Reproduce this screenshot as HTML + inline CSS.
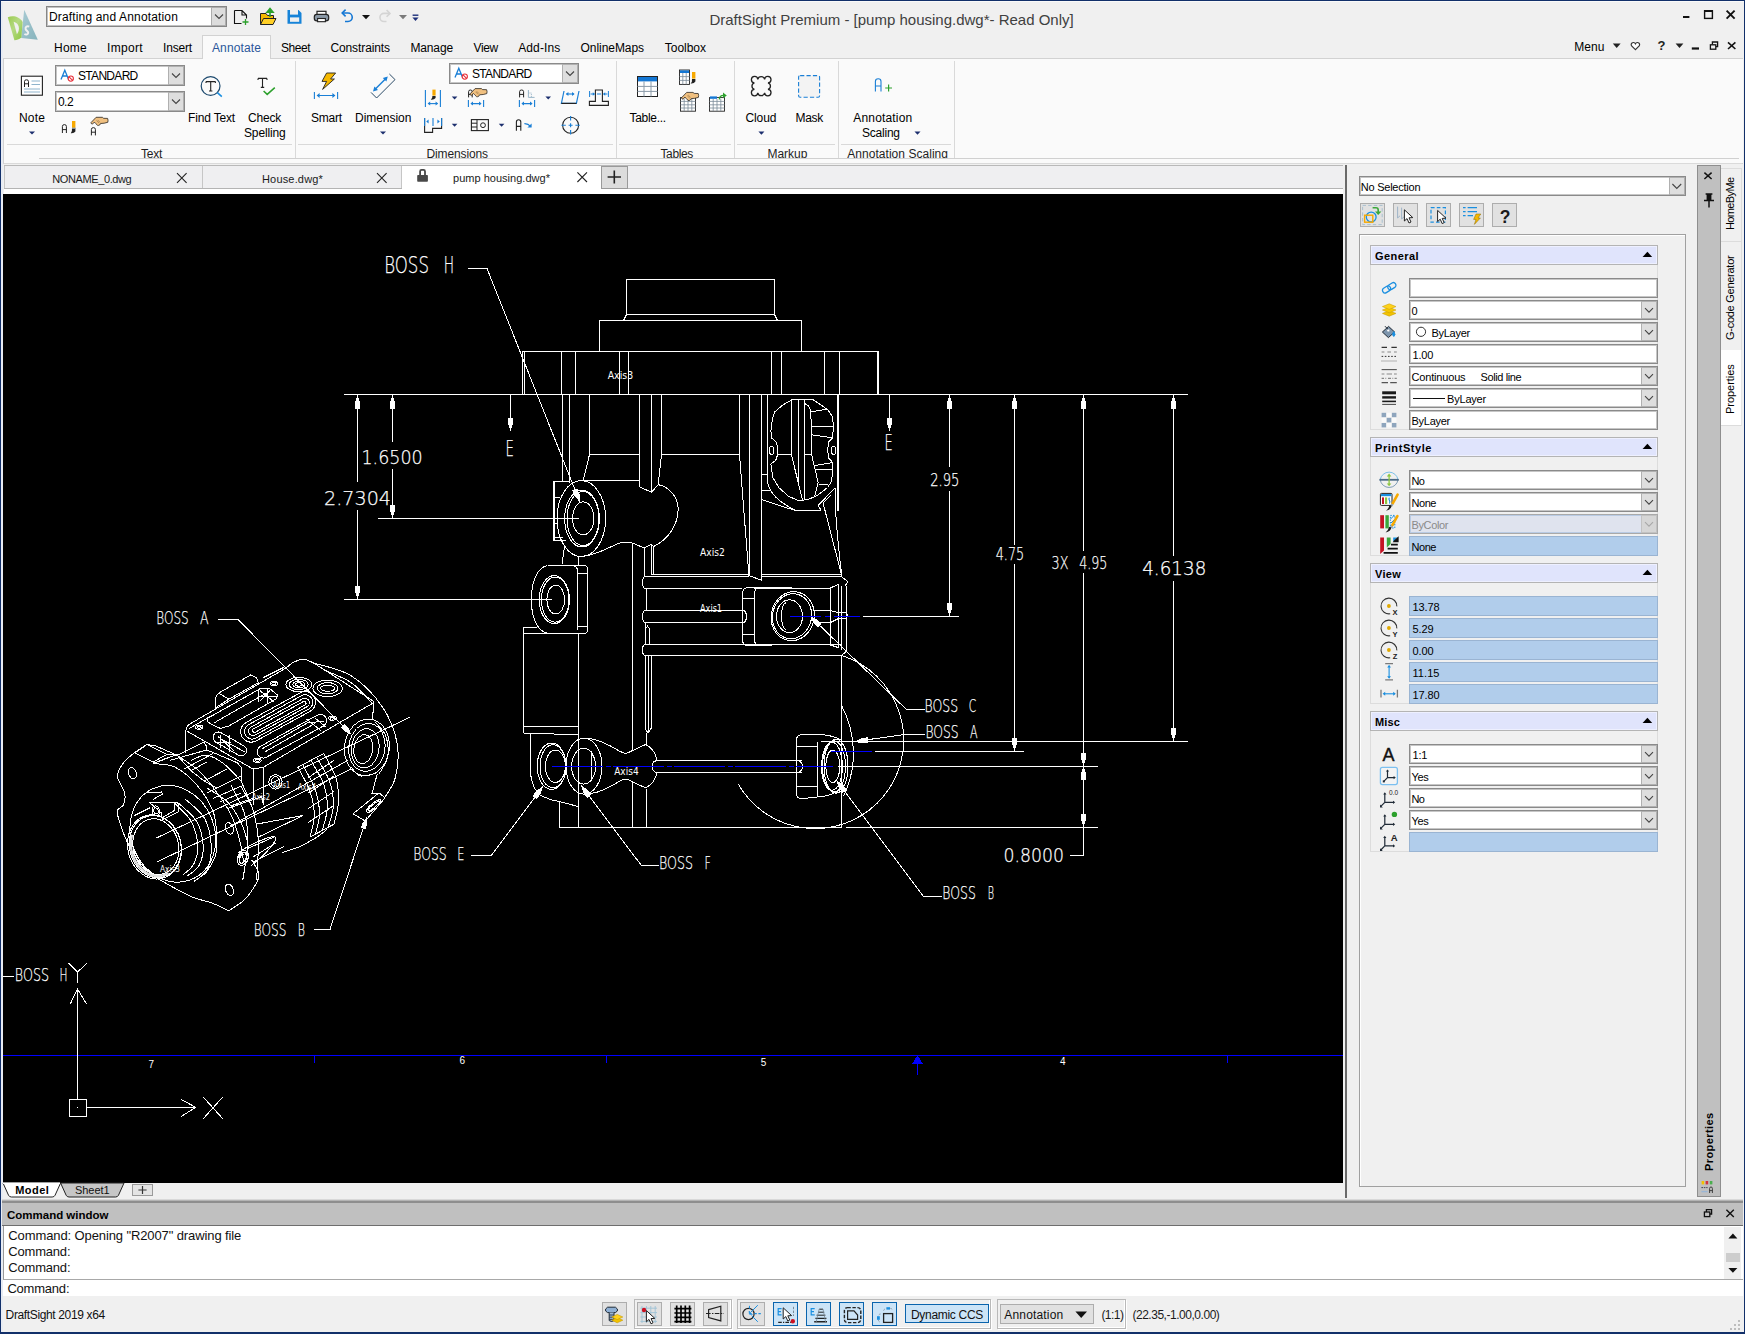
<!DOCTYPE html>
<html lang="en"><head><meta charset="utf-8"><title>DraftSight Premium - [pump housing.dwg*- Read Only]</title>
<style>
*{box-sizing:border-box;margin:0;padding:0}
html,body{width:1745px;height:1334px;overflow:hidden;background:#f0f0f0}
body{font-family:"Liberation Sans",sans-serif;font-size:12px;color:#000}
#app{position:absolute;left:0;top:0;width:1745px;height:1334px;background:#f0f0f0;overflow:hidden}
.abs{position:absolute}
.t{position:absolute;white-space:nowrap;line-height:normal}
svg{position:absolute;overflow:visible}

</style></head>
<body>
<div id="app">
<!-- chrome.html -->
<!-- window frame -->
<div class="abs" style="left:0;top:0;width:1745px;height:1px;background:#12306a"></div>
<div class="abs" style="left:0;top:0;width:1px;height:1334px;background:#12306a"></div>
<div class="abs" style="left:1744px;top:0;width:1px;height:1334px;background:#12306a"></div>
<div class="abs" style="left:0;top:1333px;width:1745px;height:1px;background:#12306a"></div>
<div class="abs" style="left:1px;top:1px;width:1743px;height:1px;background:#fafafa"></div>
<!-- logo -->
<svg style="left:6px;top:8px" width="34" height="34" viewBox="0 0 34 34">
  <defs>
    <linearGradient id="lgG" x1="0" y1="0" x2="1" y2="1"><stop offset="0" stop-color="#9acb4e"/><stop offset=".45" stop-color="#b5da84"/><stop offset="1" stop-color="#8cc63f"/></linearGradient>
    <linearGradient id="lgB" x1="0" y1="0" x2="1" y2="1"><stop offset="0" stop-color="#a9cbd4"/><stop offset="1" stop-color="#86b3bc"/></linearGradient>
  </defs>
  <path d="M18.2 1.8 L31.8 31.8 L15.2 30 Z" fill="url(#lgB)"/>
  <path d="M1.8 9.2 C7 7.2 13.5 8.5 16.6 14 L15.4 29.5 C13 31.6 10.2 32.3 8.4 32.2 Z" fill="url(#lgG)"/>
  <path d="M7.6 13.8 C12.8 15 14.8 21 10.9 26.2 Z" fill="#f0f0f0"/>
  <path d="M23.2 18.6 C21 17.6 19.2 19 19.6 21 C20 23 22.4 23 22.2 25 C22 26.6 19.8 27 18.4 26" fill="none" stroke="#f0f0f0" stroke-width="2"/>
</svg>
<!-- workspace combo -->
<div class="abs" style="left:46px;top:6px;width:181px;height:21px;background:#fff;border:1px solid #868686;box-shadow:inset 0 0 0 1px #c2c2c2"></div>
<div class="abs" style="left:211px;top:7px;width:15px;height:19px;background:#dcdcdc;border:1px solid #adadad"></div>
<svg style="left:214px;top:13px" width="10" height="7" viewBox="0 0 10 7"><path d="M1 1.5 L5 5.5 L9 1.5" fill="none" stroke="#444" stroke-width="1.1"/></svg>
<div class="t" id="wscombo" style="left:49px;top:10px;font-size:12px;letter-spacing:0.155px">Drafting and Annotation</div>
<!-- quick access icons -->
<svg style="left:233px;top:8px" width="190" height="19" viewBox="233 8 190 19">
  <!-- new -->
  <path d="M234.5 10.5 H242 L246.5 15 V18.5 M242 10.5 V15 H246.5 M234.5 10.5 V23.5 H241.5" fill="none" stroke="#111" stroke-width="1.1"/>
  <path d="M245.5 19 V25 M242.5 22 H248.5" stroke="#2ca02c" stroke-width="1.3"/>
  <!-- open -->
  <path d="M260.5 24.5 V13.5 H266 L267.5 15.5 H273.5 V18" fill="#f5b800" stroke="#222" stroke-width="1"/>
  <path d="M260.5 24.5 L263.5 18.5 H276 L273 24.5 Z" fill="#ffcf26" stroke="#222" stroke-width="1"/>
  <path d="M270 17 V11.5 M267 12.2 L270 8.6 L273 12.2 Z" stroke="#2ca02c" stroke-width="1.6" fill="#2ca02c"/>
  <!-- save -->
  <path d="M287.5 10 H298.5 L301.5 13 V23.7 H287.5 Z" fill="#1683d8"/>
  <rect x="290" y="10" width="8" height="4.6" fill="#f0f0f0"/><rect x="290" y="17.4" width="9.2" height="4.4" fill="#f0f0f0"/>
  <!-- print -->
  <rect x="317" y="11.3" width="9" height="3.4" fill="#fff" stroke="#222" stroke-width="1.2"/>
  <rect x="314.3" y="14.3" width="14.4" height="6.6" rx="2.6" fill="#8a98a6" stroke="#222" stroke-width="1.2"/>
  <rect x="317.6" y="18.5" width="7.8" height="3.2" fill="#fff" stroke="#222" stroke-width="1.1"/>
  <!-- undo -->
  <path d="M343 13 H348 A4 4 0 0 1 348 21.5 H345" fill="none" stroke="#1477d4" stroke-width="1.6"/>
  <path d="M345.6 9.6 L342.2 13 L345.6 16.4" fill="none" stroke="#1477d4" stroke-width="1.6"/>
  <path d="M362 15 H370 L366 19.2 Z" fill="#111"/>
  <!-- redo (disabled) -->
  <path d="M389 13.4 H384 A4 4 0 0 0 384 21.5 H386.5" fill="none" stroke="#d4d4d4" stroke-width="1.6"/>
  <path d="M386.6 10 L390 13.4 L386.6 16.8" fill="none" stroke="#d4d4d4" stroke-width="1.6"/>
  <path d="M399 15 H407 L403 19.2 Z" fill="#7a7a7a"/>
  <!-- customize -->
  <path d="M412.6 15.2 H418.4" stroke="#1c2f7a" stroke-width="1.4"/><path d="M412.4 17.6 H418.6 L415.5 21 Z" fill="#1c2f7a"/>
</svg>
<!-- title -->
<div class="t" id="title" style="left:709.4px;top:11px;font-size:15px;color:#404040">DraftSight Premium - [pump housing.dwg*- Read Only]</div>
<!-- window controls -->
<svg style="left:1680px;top:8px" width="60" height="14" viewBox="1680 8 60 14">
  <rect x="1683" y="16" width="6.4" height="2" fill="#111"/>
  <rect x="1704.6" y="10.8" width="7.8" height="7.6" fill="none" stroke="#111" stroke-width="1.4"/><rect x="1704" y="10" width="9" height="2" fill="#111"/>
  <path d="M1726.6 10.6 L1734.6 18.6 M1734.6 10.6 L1726.6 18.6" stroke="#111" stroke-width="1.9"/>
</svg>
<!-- right menu on tab row -->
<div class="t" id="menutxt" style="left:1574.3px;top:40px;font-size:12px;letter-spacing:0.02px">Menu</div>
<svg style="left:1610px;top:39px" width="130" height="15" viewBox="1610 39 130 15">
  <path d="M1612.8 43.6 H1620.6 L1616.7 48 Z" fill="#222"/>
  <path d="M1635.4 49.6 L1631.4 45.6 A2.1 2.1 0 0 1 1635.4 43.9 A2.1 2.1 0 0 1 1639.4 45.6 Z" fill="#fff" stroke="#333" stroke-width="1.1"/>
  <path d="M1675.6 43.6 H1683.4 L1679.5 48 Z" fill="#222"/>
  <rect x="1691.8" y="47.4" width="7.2" height="2.2" fill="#111"/>
  <rect x="1710.4" y="44.8" width="5.4" height="4.4" fill="none" stroke="#111" stroke-width="1.3"/>
  <path d="M1712.4 44.6 V42 H1717.6 V46.6 H1716" fill="none" stroke="#111" stroke-width="1.3"/>
  <path d="M1728 42.4 L1735.4 49 M1735.4 42.4 L1728 49" stroke="#111" stroke-width="1.6"/>
</svg>
<div class="t" style="left:1657.6px;top:38px;font-size:13px;font-weight:bold;color:#222">?</div>

<!-- ribbon.html -->
<div class="abs" style="left:3px;top:58px;width:1740px;height:106px;background:#fafafa;border:1px solid #d2d2d2;border-right:none"></div>
<div class="abs" style="left:4px;top:163px;width:1738px;height:1px;background:#dadada"></div>
<div class="abs" style="left:202px;top:35px;width:69px;height:24px;background:#fafafa;border:1px solid #d2d2d2;border-bottom:none"></div>
<div class="t" style="left:54.00px;top:41.00px;font-size:12px;letter-spacing:0.247px;">Home</div>
<div class="t" style="left:107.00px;top:41.00px;font-size:12px;letter-spacing:0.332px;">Import</div>
<div class="t" style="left:163.00px;top:41.00px;font-size:12px;letter-spacing:-0.169px;">Insert</div>
<div class="t" style="left:212.00px;top:41.00px;font-size:12px;letter-spacing:0.120px;color:#2b579a;">Annotate</div>
<div class="t" style="left:281.00px;top:41.00px;font-size:12px;letter-spacing:-0.472px;">Sheet</div>
<div class="t" style="left:330.40px;top:41.00px;font-size:12px;letter-spacing:-0.099px;">Constraints</div>
<div class="t" style="left:410.40px;top:41.00px;font-size:12px;letter-spacing:-0.128px;">Manage</div>
<div class="t" style="left:473.40px;top:41.00px;font-size:12px;letter-spacing:-0.298px;">View</div>
<div class="t" style="left:518.20px;top:41.00px;font-size:12px;letter-spacing:0.121px;">Add-Ins</div>
<div class="t" style="left:580.60px;top:41.00px;font-size:12px;letter-spacing:-0.063px;">OnlineMaps</div>
<div class="t" style="left:664.80px;top:41.00px;font-size:12px;letter-spacing:-0.023px;">Toolbox</div>
<div class="abs" style="left:295px;top:61px;width:1px;height:98px;background:#d9d9d9"></div>
<div class="abs" style="left:616px;top:61px;width:1px;height:98px;background:#d9d9d9"></div>
<div class="abs" style="left:734px;top:61px;width:1px;height:98px;background:#d9d9d9"></div>
<div class="abs" style="left:838px;top:61px;width:1px;height:98px;background:#d9d9d9"></div>
<div class="abs" style="left:954px;top:61px;width:1px;height:98px;background:#d9d9d9"></div>
<div class="abs" style="left:7px;top:144px;width:285px;height:1px;background:#d9d9d9"></div>
<div class="abs" style="left:298px;top:144px;width:315px;height:1px;background:#d9d9d9"></div>
<div class="abs" style="left:619px;top:144px;width:112px;height:1px;background:#d9d9d9"></div>
<div class="abs" style="left:737px;top:144px;width:98px;height:1px;background:#d9d9d9"></div>
<div class="abs" style="left:841px;top:144px;width:110px;height:1px;background:#d9d9d9"></div>
<div class="abs" style="left:39px;top:158px;width:1700px;height:1px;background:#d0d0d0"></div>
<div class="abs" style="left:4px;top:146px;width:1000px;height:12.4px;overflow:hidden">
<div class="t" style="left:137.00px;top:1.00px;font-size:12px;letter-spacing:-0.252px;color:#1e1e1e;">Text</div>
<div class="t" style="left:422.50px;top:1.00px;font-size:12px;letter-spacing:-0.119px;color:#1e1e1e;">Dimensions</div>
<div class="t" style="left:656.50px;top:1.00px;font-size:12px;letter-spacing:-0.398px;color:#1e1e1e;">Tables</div>
<div class="t" style="left:763.40px;top:1.00px;font-size:12px;letter-spacing:0.014px;color:#1e1e1e;">Markup</div>
<div class="t" style="left:843.30px;top:1.00px;font-size:12px;letter-spacing:0.035px;color:#1e1e1e;">Annotation Scaling</div>
</div>
<div class="t" style="left:19.00px;top:111.00px;font-size:12px;letter-spacing:0.163px;">Note</div>
<div class="t" style="left:188.00px;top:111.00px;font-size:12px;letter-spacing:-0.163px;">Find Text</div>
<div class="t" style="left:248.00px;top:111.00px;font-size:12px;letter-spacing:-0.203px;">Check</div>
<div class="t" style="left:244.00px;top:126.00px;font-size:12px;letter-spacing:-0.150px;">Spelling</div>
<div class="t" style="left:311.00px;top:111.00px;font-size:12px;letter-spacing:-0.201px;">Smart</div>
<div class="t" style="left:355.00px;top:111.00px;font-size:12px;letter-spacing:-0.032px;">Dimension</div>
<div class="t" style="left:629.50px;top:111.00px;font-size:12px;letter-spacing:-0.299px;">Table...</div>
<div class="t" style="left:745.40px;top:111.00px;font-size:12px;letter-spacing:-0.051px;">Cloud</div>
<div class="t" style="left:795.50px;top:111.00px;font-size:12px;letter-spacing:-0.293px;">Mask</div>
<div class="t" style="left:853.30px;top:111.00px;font-size:12px;letter-spacing:0.172px;">Annotation</div>
<div class="t" style="left:862.00px;top:126.00px;font-size:12px;letter-spacing:-0.223px;">Scaling</div>
<div class="abs" style="left:55px;top:65px;width:130px;height:21px;background:#fff;border:1px solid #8a8a8a;box-shadow:inset 0 0 0 1px #c6c6c6"></div>
<div class="abs" style="left:168px;top:66px;width:16px;height:19px;background:#dedede;border:1px solid #b0b0b0"></div>
<svg style="left:171px;top:72.0px" width="10" height="7" viewBox="0 0 10 7"><path d="M1 1.5 L5 5.5 L9 1.5" fill="none" stroke="#444" stroke-width="1.1"/></svg>
<div class="t" style="left:78.00px;top:69.00px;font-size:12px;letter-spacing:-0.690px;">STANDARD</div>
<svg style="left:60px;top:69px" width="16" height="14" viewBox="0 0 16 14"><path d="M1 10.5 L4.8 1.2 L8.6 10.5 M2.4 7 H7.2" fill="none" stroke="#1a7fd6" stroke-width="1.3"/><circle cx="10.8" cy="9.6" r="2.6" fill="#fff" stroke="#e8303a" stroke-width="1.1"/><path d="M9 7.8 L12.6 11.4" stroke="#e8303a" stroke-width="1.1"/></svg>
<div class="abs" style="left:55px;top:91px;width:130px;height:21px;background:#fff;border:1px solid #8a8a8a;box-shadow:inset 0 0 0 1px #c6c6c6"></div>
<div class="abs" style="left:168px;top:92px;width:16px;height:19px;background:#dedede;border:1px solid #b0b0b0"></div>
<svg style="left:171px;top:98.0px" width="10" height="7" viewBox="0 0 10 7"><path d="M1 1.5 L5 5.5 L9 1.5" fill="none" stroke="#444" stroke-width="1.1"/></svg>
<div class="t" style="left:58.00px;top:95.00px;font-size:12px;letter-spacing:-0.561px;">0.2</div>
<div class="abs" style="left:449px;top:63px;width:130px;height:21px;background:#fff;border:1px solid #8a8a8a;box-shadow:inset 0 0 0 1px #c6c6c6"></div>
<div class="abs" style="left:562px;top:64px;width:16px;height:19px;background:#dedede;border:1px solid #b0b0b0"></div>
<svg style="left:565px;top:70.0px" width="10" height="7" viewBox="0 0 10 7"><path d="M1 1.5 L5 5.5 L9 1.5" fill="none" stroke="#444" stroke-width="1.1"/></svg>
<div class="t" style="left:472.00px;top:67.00px;font-size:12px;letter-spacing:-0.690px;">STANDARD</div>
<svg style="left:454px;top:67px" width="16" height="14" viewBox="0 0 16 14"><path d="M1 10.5 L4.8 1.2 L8.6 10.5 M2.4 7 H7.2" fill="none" stroke="#1a7fd6" stroke-width="1.3"/><circle cx="10.8" cy="9.6" r="2.6" fill="#fff" stroke="#e8303a" stroke-width="1.1"/><path d="M9 7.8 L12.6 11.4" stroke="#e8303a" stroke-width="1.1"/></svg>
<svg style="left:0;top:58px" width="1000" height="106" viewBox="0 58 1000 106">
<g fill="none" stroke-linecap="butt">
<!-- dropdown arrows -->
<g fill="#1c2f6e" stroke="none">
<path d="M29 131.4 H35 L32 134.6 Z"/><path d="M380 131.4 H386 L383 134.6 Z"/><path d="M758.4 131.6 H764.4 L761.4 134.8 Z"/><path d="M914.5 131.6 H920.5 L917.5 134.8 Z"/>
<path d="M451.8 96.6 H457.4 L454.6 99.6 Z"/><path d="M545.4 96.6 H551 L548.2 99.6 Z"/><path d="M451.8 123.8 H457.4 L454.6 126.8 Z"/><path d="M498.8 123.8 H504.4 L501.6 126.8 Z"/>
</g>
<!-- Note icon -->
<rect x="21.4" y="76.2" width="21" height="19" fill="#fff" stroke="#222" stroke-width="1.1"/>
<path d="M24.5 87 V81.4 Q24.5 79.8 26.5 79.8 Q28.5 79.8 28.5 81.4 V87 M24.5 83.8 H28.5" stroke="#222" stroke-width="1"/>
<path d="M31.5 81 H40 M31.5 84.5 H40" stroke="#8fb4cc" stroke-width="1"/><path d="M24 89 H40 M24 92 H40" stroke="#8fb4cc" stroke-width="1"/>
<!-- A-brush icon -->
<path d="M62.4 133 V126.4 Q62.4 124.6 64.4 124.6 Q66.4 124.6 66.4 126.4 V133 M62.4 129.6 H66.4" stroke="#222" stroke-width="1"/>
<rect x="72" y="121" width="3.4" height="7" fill="#f7a900" stroke="none"/><path d="M72 128 H75.4 V131.5 Q74 133.6 70.8 133.2 Q72.4 131.6 72 128 Z" fill="#222" stroke="none"/><rect x="72" y="127.6" width="3.4" height="1.2" fill="#9ab" stroke="none"/>
<!-- A-hand icon -->
<path d="M91.4 135.4 V129.4 Q91.4 127.6 93.4 127.6 Q95.4 127.6 95.4 129.4 V135.4 M91.4 132.2 H95.4" stroke="#222" stroke-width="1"/>
<g transform="translate(91 117.3)"><path d="M0 5.3 L5.1 0 H11.4 L12.6 1 L16.6 1.1 Q17.4 3 16.8 5 L13.2 5.9 L9.6 6.2 L8.7 7.7 Q7.6 8.4 6.5 8 L4.7 6.2 L3.3 4.8 L1.5 6.8 L0.2 6.2 Z" fill="#f0c080" stroke="#2a2420" stroke-width=".8" stroke-linejoin="round"/><path d="M5.6 3.2 L8.2 5.8 M6.6 2.6 L9 5" stroke="#7a5a30" stroke-width=".5" fill="none"/></g>
<!-- Find Text -->
<circle cx="210.6" cy="86" r="9.4" stroke="#1d4a6e" stroke-width="1.2" fill="#fafafa"/>
<path d="M217.4 92.6 L221.8 96.6" stroke="#1a8fe0" stroke-width="1.6"/>
<path d="M206 81.6 H215.4 M206 81.6 V83 M215.4 81.6 V83 M210.7 81.6 V91 M209 91 H212.4" stroke="#222" stroke-width="1.1"/>
<!-- Check spelling -->
<path d="M258 78.4 H267 M258 78.4 V80 M267 78.4 V80 M262.5 78.4 V87.4 M260.8 87.4 H264.2" stroke="#222" stroke-width="1.1"/>
<path d="M263.6 91 L267.2 94.4 L274.8 87.6" stroke="#2ca02c" stroke-width="1.5"/>
<!-- Smart dimension -->
<path d="M326.6 73 H335.6 L330.6 79 H334.4 L322.6 89.4 L326.6 81.4 H322 Z" fill="#f5b800" stroke="#222" stroke-width=".9"/>
<path d="M314.4 92 V99 M337.6 92 V99 M317 95.5 H335" stroke="#1a7fd6" stroke-width="1.1"/><path d="M319.6 93 L316.6 95.5 L319.6 98 Z M332.4 93 L335.4 95.5 L332.4 98 Z" fill="#1a7fd6" stroke="none"/>
<!-- Dimension icon -->
<path d="M374.4 90 L386.4 78" stroke="#1a7fd6" stroke-width="1.4"/><path d="M373 91.4 L374.4 86.4 L378 90 Z M387.8 76.6 L386.4 81.6 L382.8 78 Z" fill="#1a7fd6" stroke="none"/>
<path d="M371 92.4 L376.6 98 L395 79.6 L389.4 74" stroke="#2a4a66" stroke-width="1"/>
<!-- row1 icon 1: dim style brush -->
<path d="M425.4 90 V107 M440.4 90 V107" stroke="#1a7fd6" stroke-width="1.1"/><path d="M428.4 103.6 H437.4" stroke="#1a7fd6" stroke-width="1.1"/><path d="M430.2 101.6 L427.6 103.6 L430.2 105.6 Z M435.6 101.6 L438.2 103.6 L435.6 105.6 Z" fill="#1a7fd6" stroke="none"/>
<rect x="432.4" y="89.6" width="3.2" height="6" fill="#f7a900" stroke="none"/><path d="M432.4 96 H435.6 V98 Q434 100 430.8 99.6 Q432.6 98.2 432.4 96 Z" fill="#222" stroke="none"/>
<!-- row1 icon 2: A hand + arrows -->
<path d="M468.6 97.4 V91.6 Q468.6 90 470.4 90 Q472.2 90 472.2 91.6 V97.4 M468.6 94.4 H472.2" stroke="#222" stroke-width="1"/>
<g transform="translate(470 88.6)"><path d="M0 5.3 L5.1 0 H11.4 L12.6 1 L16.6 1.1 Q17.4 3 16.8 5 L13.2 5.9 L9.6 6.2 L8.7 7.7 Q7.6 8.4 6.5 8 L4.7 6.2 L3.3 4.8 L1.5 6.8 L0.2 6.2 Z" fill="#f0c080" stroke="#2a2420" stroke-width=".8" stroke-linejoin="round"/><path d="M5.6 3.2 L8.2 5.8 M6.6 2.6 L9 5" stroke="#7a5a30" stroke-width=".5" fill="none"/></g>
<path d="M468.4 100 V107 M483.6 100 V107 M471 103.6 H481" stroke="#1a7fd6" stroke-width="1.1"/><path d="M473 101.6 L470.4 103.6 L473 105.6 Z M479 101.6 L481.6 103.6 L479 105.6 Z" fill="#1a7fd6" stroke="none"/>
<!-- row1 icon 3: A ruler + arrows -->
<path d="M519.6 97.4 V91.6 Q519.6 90 521.6 90 Q523.6 90 523.6 91.6 V97.4 M519.6 94.4 H523.6" stroke="#222" stroke-width="1"/>
<path d="M528.4 90 V97.4 H534.6" stroke="#9ab6c8" stroke-width="1"/><path d="M528.4 93 H531.4 V97" stroke="#9ab6c8" stroke-width=".9" stroke-dasharray="1.2 .8"/>
<path d="M519.4 100 V107 M534.6 100 V107 M522 103.6 H532" stroke="#1a7fd6" stroke-width="1.1"/><path d="M524 101.6 L521.4 103.6 L524 105.6 Z M530 101.6 L532.6 103.6 L530 105.6 Z" fill="#1a7fd6" stroke="none"/>
<!-- row1 icon 4: oblique -->
<path d="M564 91 L561.4 103.4 H576.4 L579 91" stroke="#1a7fd6" stroke-width="1.2"/><path d="M561.4 103.4 H576.4" stroke="#222" stroke-width="1.2"/>
<path d="M566.4 94 H574" stroke="#1a7fd6" stroke-width="1.1"/><path d="M568.4 92 L565.8 94 L568.4 96 Z M572 92 L574.6 94 L572 96 Z" fill="#1a7fd6" stroke="none"/>
<!-- row1 icon 5: tolerance -->
<path d="M589.4 105.4 V101.4 H595.4 V90 H602.4 V101.4 H608.4 V105.4 Z" stroke="#222" stroke-width="1.1"/>
<path d="M589.6 91 V97 M608.4 91 V97 M597 94 H601" stroke="#1a7fd6" stroke-width="1"/><path d="M590.6 94 H594.4 M603.6 94 H607.4" stroke="#1a7fd6" stroke-width="1"/><path d="M592.8 92.2 L595 94 L592.8 95.8 Z M605.2 92.2 L603 94 L605.2 95.8 Z" fill="#1a7fd6" stroke="none"/>
<!-- row2 icon 1: baseline -->
<path d="M424.6 118 V132.4 H432.6 V128.4 H441.6 V118" stroke="#222" stroke-width="1.1"/><path d="M424.6 118 V126 M433 118 V126 M441.6 118 V126" stroke="#1a7fd6" stroke-width="1.1"/>
<path d="M428.6 119.4 L426.2 121.4 L428.6 123.4 Z M437.4 119.4 L439.8 121.4 L437.4 123.4 Z" fill="#1a7fd6" stroke="none"/>
<!-- row2 icon 2: tolerance frame -->
<rect x="471.4" y="119.6" width="17" height="11" stroke="#222" stroke-width="1.1"/><path d="M477 119.6 V130.6 M471.4 123.2 H477 M471.4 127 H477" stroke="#222" stroke-width="1"/><circle cx="483" cy="125.2" r="2.4" stroke="#222" stroke-width="1"/>
<!-- row2 icon 3: A arrow -->
<path d="M516.4 130.8 V122 Q516.4 119.8 518.6 119.8 Q520.8 119.8 520.8 122 V130.8 M516.4 126.4 H520.8" stroke="#222" stroke-width="1.1"/>
<path d="M524.4 123.6 Q528 123.4 530.6 126.4" stroke="#1a7fd6" stroke-width="1.2"/><path d="M531.6 123.4 V127.6 H527.4 Z" fill="#1a7fd6" stroke="none"/>
<!-- row2 icon 4: center mark -->
<circle cx="570.6" cy="125.2" r="8" stroke="#222" stroke-width="1.1"/><path d="M570.6 116 V120.4 M570.6 130 V134.4 M561.4 125.2 H565.8 M575.4 125.2 H579.8 M568.6 125.2 H572.6 M570.6 123.2 V127.2" stroke="#1a7fd6" stroke-width="1.1"/>
<!-- Table big icon -->
<rect x="637.5" y="76.5" width="20" height="20" fill="#fff" stroke="#222" stroke-width="1"/><rect x="638" y="77" width="19" height="4.4" fill="#1477d4" stroke="none"/>
<path d="M644 81.4 V96.5 M651 81.4 V96.5 M637.5 86.4 H657.5 M637.5 91.4 H657.5" stroke="#8a9aa8" stroke-width="1"/>
<!-- small table icons -->
<g>
<rect x="679.5" y="70" width="10" height="14.4" fill="#fff" stroke="#222" stroke-width=".9"/><rect x="680" y="70.4" width="9" height="2.6" fill="#1477d4" stroke="none"/><path d="M682.8 73 V84.4 M686.2 73 V84.4 M679.5 76.6 H689.5 M679.5 80.4 H689.5" stroke="#7a8a98" stroke-width=".8"/>
<rect x="692" y="72" width="3.4" height="6.6" fill="#f7a900" stroke="none"/><path d="M692 79 H695.4 V81.6 Q694 83.8 690.6 83.4 Q692.4 82 692 79 Z" fill="#222" stroke="none"/>
<rect x="680.5" y="97.6" width="15" height="13.6" fill="#fff" stroke="#222" stroke-width=".9"/><path d="M684.2 99 V111 M688 99 V111 M691.8 99 V111 M680.5 101.4 H695.5 M680.5 104.8 H695.5 M680.5 108 H695.5" stroke="#7a8a98" stroke-width=".8"/>
<g transform="translate(681.6 92.4)"><path d="M0 5.3 L5.1 0 H11.4 L12.6 1 L16.6 1.1 Q17.4 3 16.8 5 L13.2 5.9 L9.6 6.2 L8.7 7.7 Q7.6 8.4 6.5 8 L4.7 6.2 L3.3 4.8 L1.5 6.8 L0.2 6.2 Z" fill="#f0c080" stroke="#2a2420" stroke-width=".8" stroke-linejoin="round"/><path d="M5.6 3.2 L8.2 5.8 M6.6 2.6 L9 5" stroke="#7a5a30" stroke-width=".5" fill="none"/></g>
<rect x="709.5" y="97.6" width="15" height="13.6" fill="#fff" stroke="#222" stroke-width=".9"/><rect x="710" y="96.4" width="7" height="2.4" fill="#1477d4" stroke="none"/><path d="M713.2 99 V111 M717 99 V111 M720.8 99 V111 M709.5 101.4 H724.5 M709.5 104.8 H724.5 M709.5 108 H724.5" stroke="#7a8a98" stroke-width=".8"/>
<path d="M719.4 99.4 Q719.4 95.4 723.6 95.4" stroke="#2ca02c" stroke-width="1.4"/><path d="M723 92.6 L726.8 95.4 L723 98.2 Z" fill="#2ca02c" stroke="none"/>
</g>
<!-- Cloud -->
<path d="M757.8 79.4 A3.45 3.45 0 0 1 764.6 79.4 A3.2 3.2 0 1 1 768 82.8 A3.45 3.45 0 0 1 768 89.4 A3.2 3.2 0 1 1 764.6 92.8 A3.45 3.45 0 0 1 757.8 92.8 A3.2 3.2 0 1 1 754.4 89.4 A3.45 3.45 0 0 1 754.4 82.8 A3.2 3.2 0 1 1 757.8 79.4 Z" stroke="#222" stroke-width="1.3"/>
<!-- Mask -->
<rect x="798.6" y="75.6" width="21" height="21.6" rx="1.5" fill="#f3f3f3" stroke="#1a7fd6" stroke-width="1.1" stroke-dasharray="4.2 2.2"/>
<!-- Annotation scaling A+ -->
<path d="M875.4 91.4 V81.4 Q875.4 78.8 878.2 78.8 Q881 78.8 881 81.4 V91.4 M875.4 86 H881" stroke="#1a7fd6" stroke-width="1.1"/>
<path d="M888.6 84.6 V91.6 M885.2 88 H892" stroke="#2ca02c" stroke-width="1.2"/>
</g>
</svg>

<!-- doctabs.html -->
<div class="abs" style="left:4px;top:165px;width:1339px;height:24px;background:#efeff1;border-top:1px solid #b9b9b9;border-bottom:1px solid #b4b4b4"></div>
<div class="abs" style="left:4px;top:189px;width:1339px;height:5px;background:#fff"></div>
<div class="abs" style="left:4px;top:166px;width:1px;height:22px;background:#c6c6c6"></div>
<div class="abs" style="left:202px;top:166px;width:1px;height:22px;background:#c6c6c6"></div>
<div class="abs" style="left:402px;top:166px;width:199px;height:28px;background:#fff"></div>
<div class="abs" style="left:401px;top:166px;width:1px;height:22px;background:#c6c6c6"></div>
<div class="abs" style="left:601px;top:166px;width:27px;height:23px;background:#dcdcdc;border:1px solid #9a9a9a"></div>
<div class="t" style="left:52.30px;top:173.00px;font-size:11px;letter-spacing:-0.396px;color:#1a1a1a;">NONAME_0.dwg</div>
<div class="t" style="left:262.00px;top:173.00px;font-size:11px;letter-spacing:0.169px;color:#1a1a1a;">House.dwg*</div>
<div class="t" style="left:453.00px;top:172.00px;font-size:11px;letter-spacing:0.022px;color:#1a1a1a;">pump housing.dwg*</div>
<svg style="left:0;top:160px" width="700" height="34" viewBox="0 160 700 34">
<path d="M177 173.2 L186.6 182.8 M186.6 173.2 L177 182.8" stroke="#222" stroke-width="1.1"/>
<path d="M377 173.2 L386.6 182.8 M386.6 173.2 L377 182.8" stroke="#222" stroke-width="1.1"/>
<path d="M577.4 172.4 L587 182 M587 172.4 L577.4 182" stroke="#222" stroke-width="1.1"/>
<path d="M607.6 177 H621 M614.3 170.6 V183.4" stroke="#222" stroke-width="1.6"/>
<rect x="417.2" y="175" width="10.7" height="6.8" rx="0.8" fill="#484848"/><path d="M420.1 175.4 V171.4 Q420.1 169.9 421.6 169.9 H423.5 Q425 169.9 425 171.4 V175.4" fill="none" stroke="#484848" stroke-width="1.8"/>
</svg>

<!-- canvas.html -->
<div class="abs" style="left:3px;top:194px;width:1340px;height:989px;background:#000;overflow:hidden">
<svg style="left:-3px;top:-194px" width="1346" height="1186" viewBox="0 0 1346 1186">
<style>.w{fill:none;stroke:#fff;stroke-width:1;shape-rendering:crispEdges}.w .f,.f{fill:#fff;stroke:none}.b{fill:none;stroke:#0000ff;stroke-width:1;shape-rendering:crispEdges}.ct{font-family:"DejaVu Sans Light","DejaVu Sans","Liberation Sans",sans-serif;font-weight:200;fill:#fff;stroke:#fff;stroke-width:.25}.ct2{font-family:"DejaVu Sans","Liberation Sans",sans-serif;font-weight:400;fill:#fff;stroke:none}.st{font-family:"Liberation Sans",sans-serif;fill:#fff;stroke:none}</style>
<g class="w">
<path d="M344.0 394.5 L1188.0 394.5"/>
<path d="M357.5 395.0 L357.5 482.0"/>
<path d="M357.5 510.0 L357.5 599.0"/>
<polygon class="f" points="357.5,395.0 360.1,402.4 360.1,408.5 354.9,408.5 354.9,402.4"/>
<polygon class="f" points="357.5,599.0 354.9,591.6 354.9,585.5 360.1,585.5 360.1,591.6"/>
<path d="M392.5 395.0 L392.5 442.0"/>
<path d="M392.5 469.0 L392.5 518.0"/>
<polygon class="f" points="392.5,395.0 395.1,402.4 395.1,408.5 389.9,408.5 389.9,402.4"/>
<polygon class="f" points="392.5,518.0 389.9,510.6 389.9,504.5 395.1,504.5 395.1,510.6"/>
<path d="M378.0 518.5 L579.0 518.5"/>
<path d="M344.0 599.5 L552.0 599.5"/>
<path d="M510.5 395.0 L510.5 431.0"/>
<polygon class="f" points="510.5,431.5 508.1,423.8 508.1,417.5 512.9,417.5 512.9,423.8"/>
<path d="M889.5 395.0 L889.5 431.0"/>
<polygon class="f" points="889.5,431.5 887.1,423.8 887.1,417.5 891.9,417.5 891.9,423.8"/>
<path d="M949.5 395.0 L949.5 467.0"/>
<path d="M949.5 491.0 L949.5 616.0"/>
<polygon class="f" points="949.5,395.0 952.1,402.4 952.1,408.5 946.9,408.5 946.9,402.4"/>
<polygon class="f" points="949.5,616.0 946.9,608.6 946.9,602.5 952.1,602.5 952.1,608.6"/>
<path d="M863.0 616.5 L959.0 616.5"/>
<path d="M1014.5 395.0 L1014.5 545.0"/>
<path d="M1014.5 564.0 L1014.5 751.0"/>
<polygon class="f" points="1014.5,395.0 1017.1,402.4 1017.1,408.5 1011.9,408.5 1011.9,402.4"/>
<polygon class="f" points="1014.5,751.0 1011.9,743.6 1011.9,737.5 1017.1,737.5 1017.1,743.6"/>
<path d="M875.0 751.5 L1024.0 751.5"/>
<path d="M1083.5 395.0 L1083.5 551.0"/>
<path d="M1083.5 573.0 L1083.5 855.5"/>
<polygon class="f" points="1083.5,395.0 1086.1,402.4 1086.1,408.5 1080.9,408.5 1080.9,402.4"/>
<polygon class="f" points="1083.5,766.0 1080.9,758.6 1080.9,752.5 1086.1,752.5 1086.1,758.6"/>
<polygon class="f" points="1083.5,766.5 1086.1,773.9 1086.1,780.0 1080.9,780.0 1080.9,773.9"/>
<polygon class="f" points="1083.5,827.0 1080.9,819.6 1080.9,813.5 1086.1,813.5 1086.1,819.6"/>
<path d="M1070.0 855.5 L1083.5 855.5"/>
<path d="M1173.5 395.0 L1173.5 556.0"/>
<path d="M1173.5 581.0 L1173.5 741.0"/>
<polygon class="f" points="1173.5,395.0 1176.1,402.4 1176.1,408.5 1170.9,408.5 1170.9,402.4"/>
<polygon class="f" points="1173.5,741.0 1170.9,733.6 1170.9,727.5 1176.1,727.5 1176.1,733.6"/>
<path d="M821.0 741.5 L1188.0 741.5"/>
<path d="M838.0 766.5 L1098.0 766.5"/>
<path d="M846.0 827.5 L1098.0 827.5"/>
<path d="M468.0 268.5 L487.0 268.5 L580.0 502.3"/>
<polygon class="f" points="580.0,502.3 574.7,496.1 572.4,490.3 577.2,488.3 579.6,494.2"/>
<path d="M924.6 709.5 L906.4 709.5 L810.1 616.1"/>
<polygon class="f" points="810.1,616.1 817.4,619.6 822.0,624.0 818.3,627.7 813.8,623.3"/>
<path d="M924.6 734.5 L904.5 734.5 L854.1 741.6"/>
<polygon class="f" points="854.1,741.8 861.4,738.2 867.6,737.3 868.3,742.4 862.1,743.3"/>
<path d="M942.3 896.5 L923.4 896.5 L836.2 780.1"/>
<polygon class="f" points="836.2,780.1 842.9,784.7 846.7,789.7 842.5,792.9 838.7,787.8"/>
<path d="M659.0 865.5 L641.4 865.5 L580.9 785.2"/>
<polygon class="f" points="580.9,785.2 587.6,789.8 591.4,794.8 587.2,797.9 583.5,792.9"/>
<path d="M471.0 855.5 L491.3 855.5 L543.0 786.4"/>
<polygon class="f" points="543.0,786.4 540.5,794.1 536.7,799.2 532.5,796.1 536.3,791.0"/>
<path d="M623.5 320.5 L626.5 314.4 L626.5 279.5 L774.5 279.5 L774.5 314.4 L777.5 320.5"/>
<path d="M626.5 314.5 L774.5 314.5"/>
<path d="M599.5 351.5 L599.5 320.5 L801.5 320.5 L801.5 351.5"/>
<path d="M522.5 394.5 L522.5 351.5 L878.5 351.5 L878.5 394.5"/>
<path d="M524.5 351.5 L524.5 394.5"/>
<path d="M877.5 351.5 L877.5 394.5"/>
<path d="M561.5 351.5 L561.5 394.5"/>
<path d="M575.5 351.5 L575.5 394.5"/>
<path d="M619.5 351.5 L619.5 394.5"/>
<path d="M628.5 351.5 L628.5 394.5"/>
<path d="M771.5 351.5 L771.5 394.5"/>
<path d="M781.5 351.5 L781.5 394.5"/>
<path d="M824.5 351.5 L824.5 394.5"/>
<path d="M839.5 351.5 L839.5 394.5"/>
<path d="M562.5 394.5 L562.5 481.5"/>
<path d="M569.5 394.5 L569.5 483.0"/>
<path d="M589.5 394.5 L589.5 454.5 L583.2 480.5"/>
<path d="M589.5 454.5 L639.5 454.5"/>
<path d="M583.0 480.5 L639.5 480.5"/>
<path d="M639.5 394.5 L639.5 486.8 L651.5 492.3 L651.5 394.5"/>
<path d="M661.5 394.5 L661.5 454.5 L658.2 484.7 L651.5 492.3"/>
<path d="M661.5 454.5 L739.5 454.5"/>
<path d="M739.5 394.5 L739.5 454.5 L748.9 575.5"/>
<path d="M749.5 394.5 L749.5 575.0"/>
<path d="M761.5 394.5 L761.5 580.3 L748.9 575.5"/>
<path d="M767.5 394.5 L767.5 481.6"/>
<path d="M761.5 474.5 L767.5 474.5"/>
<path d="M761.5 490.9 L770.4 490.9"/>
<path d="M837.5 394.5 L837.5 510.8"/>
<path d="M838.5 394.5 L838.5 510.8"/>
<path d="M658.2 484.7 C668 486 678.6 497 678.1 509 C678.5 524 668 540 653.4 546.6"/>
<path d="M582.5 556.2 C590 556 600 552 610 547.3 C616 544.5 618 542.9 621 542.9 L632 542.9 L644.4 548 L651.3 544.5 L653.4 546.6"/>
<path d="M632.5 543.0 L632.5 750.6"/>
<path d="M644.5 548.0 L644.5 576.9"/>
<path d="M651.5 545.0 L651.5 575.0"/>
<path d="M653.5 546.6 L653.5 575.0"/>
<path d="M651.5 574.5 L749.0 574.5"/>
<path d="M644.5 576.5 L749.0 576.5"/>
<path d="M761.5 574.5 L841.7 574.5"/>
<path d="M761.5 576.5 L841.7 576.5"/>
<path d="M841.7 576.9 L847.2 581.0 L847.2 583.0 L845.2 585.8"/>
<path d="M742 576.5 H645.9 Q642.4 576.5 642.4 582.5 Q642.4 588.5 645.9 588.5 H742"/>
<path d="M742.6 610.5 H645.9 Q642.4 610.5 642.4 616.5 Q642.4 622.5 645.9 622.5 H742.6"/>
<path d="M841.5 644.5 H645.9 Q642.4 644.5 642.4 650.0 Q642.4 655.5 645.9 655.5 H841.5"/>
<path d="M742.6 610.5 Q746.4 610.5 746.4 616.5 Q746.4 622.5 742.6 622.5"/>
<path d="M646.5 588.5 L646.5 610.5"/>
<path d="M645.5 622.5 L645.5 644.5"/>
<path d="M649.5 628.9 L649.5 644.5"/>
<path d="M645.5 655.5 L645.5 729.0 L648.0 733.2 L651.3 728.0 L651.3 655.5"/>
<path d="M648.5 655.5 L648.5 733.0"/>
<path d="M645.5 628.9 L647.5 626.0 L649.5 628.9"/>
<path d="M646.5 733.0 L646.5 744.4"/>
<ellipse cx="583.2" cy="518.4" rx="10.7" ry="16.5"/>
<ellipse cx="582.0" cy="518.6" rx="17.3" ry="28.4"/>
<ellipse cx="583.0" cy="518.6" rx="16.0" ry="27.0"/>
<ellipse cx="581.3" cy="518.6" rx="24.3" ry="38.0"/>
<path d="M569.0 481.5 L553.5 481.5 L553.5 540.5 L566.0 540.5"/>
<path d="M554.5 481.5 L554.5 540.5"/>
<path d="M554.5 497.5 L560.0 497.5"/>
<path d="M554.5 523.5 L558.0 523.5"/>
<path d="M554.5 537.5 L563.0 537.5"/>
<path d="M564.6 546.6 L561.9 564.5"/>
<path d="M578.5 556.0 L578.5 565.0"/>
<path d="M547.5 565.5 H583.9 Q587.6 565.5 587.6 569.5 V629.5 Q587.6 633.5 583.5 633.5 H548"/>
<path d="M577.5 569.0 L577.5 630.0"/>
<path d="M577.5 573.5 L587.6 573.5"/>
<path d="M577.5 626.5 L587.6 626.5"/>
<path d="M572 565.5 Q577.5 566 577.5 571"/>
<path d="M547.5 565.5 C536 568 531.2 584 531.4 599.6 C531.2 615 536 631 548 633.5"/>
<ellipse cx="555.7" cy="599.6" rx="8.9" ry="14.4"/>
<ellipse cx="554.3" cy="599.6" rx="15.1" ry="24.0"/>
<ellipse cx="555.2" cy="599.6" rx="13.8" ry="22.6"/>
<path d="M537.0 627.5 L523.5 627.5 L523.5 733.0 L553.6 734.0 L578.5 734.0"/>
<path d="M523.5 633.5 L548.0 633.5"/>
<path d="M523.5 726.5 L578.5 726.5"/>
<path d="M578.5 633.5 L578.5 827.5"/>
<path d="M530.5 733 V771 C531 786 538 795 543 796.5 C549 799.5 554 800.8 559.4 801.5 L578.5 806.6"/>
<path d="M559.5 801.5 L559.5 827.5"/>
<path d="M559.5 827.5 L841.5 827.5"/>
<path d="M632.5 782.0 L632.5 827.5"/>
<path d="M646.5 789.0 L646.5 827.5"/>
<path d="M841.5 655.5 L841.5 827.5"/>
<ellipse cx="551.6" cy="766.2" rx="14.4" ry="23.2"/>
<ellipse cx="553.0" cy="766.2" rx="13.0" ry="21.5"/>
<ellipse cx="555.4" cy="766.2" rx="10.0" ry="16.2"/>
<ellipse cx="584.0" cy="766.2" rx="18.0" ry="28.0"/>
<ellipse cx="583.6" cy="766.2" rx="12.0" ry="17.9"/>
<path d="M591.5 751.0 L591.5 781.0"/>
<path d="M584 738.2 C596 738.6 602 742 610 745.8 C618 750 622 753.4 626.5 753.4 L645.8 744.4 C652 748 656 754 656.8 760.2"/>
<path d="M584 794.2 C596 793.8 602 790.4 610 786.6 C618 782.4 622 779 626.5 779 L645.8 788 C652 784.4 656 778.4 656.8 772.6"/>
<path d="M801.5 760.5 H656.8 Q652.4 761 652.4 766.4 Q652.4 772 656.8 772.5 H801.5"/>
<path d="M796.3 760.5 H798 Q802.5 762 802.5 766.4 Q802.5 771 798 772.5 H796.3"/>
<path d="M821.8 734.7 H802.5 Q796.3 734.7 796.3 741 V792.5 Q796.3 798.7 802.5 798.7 L821 796.5 Q832 796 841 789"/>
<path d="M821.8 734.7 Q832 735.2 841 740"/>
<path d="M817.5 741.6 L817.5 796.0"/>
<path d="M796.3 746.5 L817.5 746.5"/>
<path d="M796.3 786.5 L817.5 786.5"/>
<ellipse cx="832.8" cy="766.3" rx="7.0" ry="16.2"/>
<ellipse cx="832.0" cy="766.3" rx="10.5" ry="24.0"/>
<ellipse cx="834.0" cy="766.3" rx="11.5" ry="25.5"/>
<ellipse cx="836.0" cy="766.3" rx="12.0" ry="27.0"/>
<path d="M841.8 655.5 A88.6 88.6 0 1 1 737.9 783.5"/>
<path d="M841.7 705.8 A100.7 100.7 0 0 1 843.8 795.9"/>
<path d="M791.5 587.5 H748 Q742.4 588 742.4 594 V639.5 Q742.4 645.5 748 645.7 L790 644.5"/>
<path d="M760 587.5 Q754.4 588 754.4 594 V639.5 Q754.4 645.5 760 645.7"/>
<path d="M742.4 598.5 L754.4 598.5"/>
<path d="M742.4 634.5 L754.4 634.5"/>
<path d="M754.0 588.5 L830.0 588.5"/>
<path d="M790.0 644.5 L830.0 644.5"/>
<ellipse cx="792.7" cy="616.2" rx="21.5" ry="24.6" transform="rotate(12 792.7 616.2)"/>
<ellipse cx="792.0" cy="616.2" rx="19.5" ry="22.6" transform="rotate(12 792 616.2)"/>
<ellipse cx="789.5" cy="616.2" rx="13.0" ry="16.4"/>
<path d="M786 602.5 A5.5 14 0 0 0 786 630"/>
<path d="M830.5 587.9 L830.5 645.0"/>
<path d="M838.5 584.4 L838.5 647.7"/>
<path d="M841.5 586.0 L841.5 650.0"/>
<path d="M846.5 586.0 L846.5 651.2"/>
<path d="M846.5 651.2 L841.5 655.6"/>
<path d="M830.5 587.9 L838.5 584.4"/>
<path d="M814.2 610.5 L830.5 610.5 L838.5 612.6"/>
<path d="M814.2 622.5 L830.5 622.5 L838.5 618.5"/>
<path d="M830.5 645.0 L838.5 647.7"/>
<path d="M838.5 612.6 H845 Q847.4 613 847.4 615.5 Q847.4 618 845 618.5 H838.5"/>
<path d="M792.4 399.5 L812.8 399.5 L827.5 409.5 L832.3 416.3 L833.3 424.1 L832.8 437.8 L828.9 441.7 L827.5 449.5 L828.9 458.2 L832.8 462.6 L832.8 470.9 L831.4 481.6 L827.5 487.5 L817.7 495.3 L808.0 499.6 L798.2 500.6 L788.5 496.2 L778.7 487.5 L772.9 477.7 L770.9 464.1 L775.8 460.2 L777.8 454.3 L776.8 442.6 L771.9 438.2 L770.9 430.9 L772.4 418.3 L774.8 411.9 L782.6 405.1 Z"/>
<ellipse cx="771.6" cy="450.4" rx="2.2" ry="4.3"/>
<ellipse cx="833.6" cy="450.4" rx="2.2" ry="4.3"/>
<path d="M791.5 400.7 L791.5 455.3 L802.6 500.1"/>
<path d="M798.5 399.5 L798.5 482.0"/>
<path d="M804.5 399.5 L804.5 500.0"/>
<path d="M805.0 403.6 L808.5 406.0 L810.9 411.0 L811.5 454.3 L818.2 482.6 L814.8 496.2"/>
<path d="M811.4 411.9 L827.5 409.0"/>
<path d="M811.4 426.5 L832.8 426.5"/>
<path d="M811.4 434.8 L832.8 437.8"/>
<path d="M777.8 454.5 L791.4 454.5"/>
<path d="M804.6 454.5 L811.4 454.5"/>
<path d="M815.3 465.5 L832.8 462.6"/>
<path d="M816.3 469.5 L832.8 469.5"/>
<path d="M818.7 484.5 L828.4 484.5"/>
<path d="M767.5 481.6 C768 486 772 493 775.8 497.2 C781 502 790 508 796.3 510.5 H821.1"/>
<path d="M762.2 499.6 L788.5 508.4 L796.3 510.5"/>
<path d="M835.5 487.5 L835.5 510.4"/>
<path d="M835.3 487.5 L818.2 505.5 L821.1 510.4"/>
<path d="M831.4 494.8 L823.1 503.1 L841.7 575.5"/>
<path d="M835.5 510.4 Q838 545 841.7 575.5"/>
</g>
<g class="b">
<path d="M552 766.5 H833" stroke-dasharray="50.8 3.2 4.9 2.1"/>
<path d="M790.2 616.5 H860" stroke-dasharray="31 4 5 4"/>
<path d="M830.5 751.5 H872"/>
<path d="M3 1055.5 H1343"/>
</g>
<g class="w i">
<path d="M185.9 753.4 C185.9 749.7 185.6 735.6 185.9 731.0 C186.1 726.4 186.7 727.2 187.6 725.9 C188.4 724.6 190.5 723.7 191.0 723.3"/>
<path d="M191.0 723.3 L285.9 668.1"/>
<path d="M285.9 668.1 C287.3 667.0 291.3 663.2 294.5 661.7 C297.6 660.3 301.7 659.3 304.8 659.5 C308.0 659.7 312.0 662.4 313.4 662.9"/>
<path d="M313.4 662.9 L373.8 701.4 L373.8 706.9 L372.1 719.0"/>
<path d="M373.8 702.6 L263.4 767.2"/>
<path d="M186.7 731.0 L253.1 769.0 L263.4 767.2"/>
<path d="M253.1 769.0 L253.1 805.2"/>
<path d="M263.4 767.2 L263.4 805.2"/>
<path d="M263.4 677.6 L284.1 667.2"/>
<path d="M189.3 728.4 L213.4 714.7"/>
<path d="M215.5 707.8 L215.5 697.4 L218.6 693.1 L250.5 675.0 L256.6 677.6 L258.6 683.6"/>
<path d="M218.6 693.1 L229.0 699.1 L258.3 682.8"/>
<path d="M215.5 707.8 L229.0 699.1"/>
<ellipse cx="199.1" cy="727.2" rx="3.8" ry="2.1"/>
<ellipse cx="199.1" cy="727.2" rx="2.1" ry="1.0"/>
<ellipse cx="273.8" cy="683.6" rx="3.8" ry="2.1"/>
<ellipse cx="273.8" cy="683.6" rx="2.1" ry="1.0"/>
<ellipse cx="332.4" cy="718.1" rx="3.8" ry="2.1"/>
<ellipse cx="332.4" cy="718.1" rx="2.1" ry="1.0"/>
<ellipse cx="257.4" cy="760.3" rx="3.8" ry="2.1"/>
<ellipse cx="257.4" cy="760.3" rx="2.1" ry="1.0"/>
<ellipse cx="298.8" cy="684.5" rx="12.9" ry="7.2"/>
<ellipse cx="298.8" cy="684.5" rx="9.5" ry="5.2"/>
<ellipse cx="298.8" cy="684.5" rx="6.0" ry="3.3"/>
<ellipse cx="298.8" cy="684.5" rx="3.1" ry="1.7"/>
<ellipse cx="327.6" cy="688.3" rx="14.7" ry="8.3"/>
<ellipse cx="327.6" cy="688.3" rx="10.3" ry="5.7"/>
<ellipse cx="327.6" cy="688.3" rx="6.9" ry="2.9"/>
<path d="M207.9 718.1 L260.0 688.8 L270.3 689.0 L277.6 695.2 L275.9 699.1 L229.0 725.9 L220.3 728.4 L212.1 724.5 L207.9 722.1 Z"/>
<path d="M213.4 723.3 L266.0 693.1"/>
<path d="M258.3 689.3 L258.3 701.7"/>
<path d="M267.8 689.3 L267.8 703.8"/>
<path d="M258.3 696.6 L276.9 696.6"/>
<path d="M259.7 690.5 L273.8 701.7"/>
<path d="M270.3 690.0 L259.7 701.4"/>
<rect x="236.9" y="706.4" width="82.4" height="21.0" rx="10.5" transform="rotate(-28.7 278.1 716.9)"/>
<rect x="240.7" y="709.3" width="75.9" height="15.2" rx="7.6" transform="rotate(-28.7 278.6 716.9)"/>
<rect x="244.9" y="712.4" width="68.1" height="9.0" rx="4.5" transform="rotate(-28.7 279.0 716.9)"/>
<rect x="249.1" y="715.0" width="60.3" height="3.8" rx="1.9" transform="rotate(-28.7 279.3 716.9)"/>
<rect x="253.1" y="730.0" width="77.6" height="12.4" rx="6.2" transform="rotate(-28.7 291.9 736.2)"/>
<path d="M265.2 751.7 L315.2 723.3"/>
<path d="M261.7 749.1 L308.3 722.4"/>
<path d="M306.6 719.0 L321.2 731.0"/>
<path d="M315.2 718.1 L325.5 726.7"/>
<path d="M308.3 722.4 L323.8 721.6"/>
<rect x="211.3" y="738.6" width="37.1" height="10.7" rx="5.3" transform="rotate(30 229.8 744.0)"/>
<path d="M220.3 734.5 L220.3 748.3"/>
<path d="M229.0 735.3 L229.0 751.7"/>
<path d="M215.2 742.2 L230.7 742.2"/>
<path d="M222.1 739.7 L244.5 751.7"/>
<path d="M217.8 736.2 L234.1 750.9"/>
<path d="M313.4 662.9 C319.8 665.1 339.9 668.5 351.4 675.9 C362.9 683.2 374.8 695.7 382.4 706.9 C390.0 718.1 394.9 731.3 397.1 743.1 C399.2 754.9 397.5 768.4 395.3 777.6 C393.2 786.8 386.0 794.8 384.1 798.3"/>
<path d="M323.8 669.8 C328.4 672.0 343.3 677.2 351.4 682.8 C359.4 688.4 368.6 700.0 372.1 703.4"/>
<ellipse cx="366.9" cy="747.4" rx="22.4" ry="28.4" transform="rotate(8 366.9 747.4)"/>
<ellipse cx="366.9" cy="747.4" rx="18.1" ry="24.1" transform="rotate(8 366.9 747.4)"/>
<ellipse cx="365.2" cy="748.3" rx="13.8" ry="19.8" transform="rotate(8 365.2 748.3)"/>
<ellipse cx="363.4" cy="749.1" rx="9.5" ry="14.7" transform="rotate(8 363.4 749.1)"/>
<path d="M375.5 722.4 C377.2 724.7 383.9 730.5 385.9 736.2 C387.9 742.0 388.7 750.6 387.6 756.9 C386.4 763.2 380.4 771.3 379.0 774.1"/>
<path d="M351.4 767.2 C352.8 768.7 356.0 774.9 360.0 775.9 C364.0 776.9 372.9 773.7 375.5 773.3"/>
<path d="M377.2 774.1 L372.1 793.1 L379.0 794.0"/>
<path d="M156.6 837.9 L410.0 717.2"/>
<path d="M156.6 862.1 L351.4 769.0"/>
<path d="M230.7 825.9 L347.9 760.3"/>
<path d="M353.1 813.8 L379.0 792.8 L385.0 797.9 L365.2 821.0 Z"/>
<ellipse cx="373.8" cy="806.0" rx="9.0" ry="2.8" transform="rotate(-40 373.8 806.0)"/>
<ellipse cx="373.8" cy="806.0" rx="6.9" ry="1.6" transform="rotate(-40 373.8 806.0)"/>
<path d="M297.9 767.2 C299.9 771.3 307.3 783.3 310.0 791.4 C312.7 799.4 314.3 807.9 314.3 815.5 C314.3 823.1 310.7 833.5 310.0 837.1"/>
<path d="M310.9 760.3 C313.0 764.4 321.1 776.4 323.8 784.5 C326.5 792.5 327.5 800.9 327.2 808.6 C327.0 816.4 322.9 827.3 322.1 831.0"/>
<path d="M323.8 753.4 C325.8 757.5 333.4 769.5 335.9 777.6 C338.3 785.6 338.7 794.0 338.4 801.7 C338.2 809.5 334.9 820.4 334.1 824.1"/>
<path d="M303.1 765.5 C305.1 769.5 312.4 781.6 315.2 789.7 C317.9 797.7 319.5 806.2 319.5 813.8 C319.5 821.4 315.9 831.8 315.2 835.3"/>
<path d="M316.9 757.8 C319.1 761.8 327.1 773.9 329.8 781.9 C332.6 789.9 333.6 798.4 333.3 806.0 C333.0 813.6 329.0 824.0 328.1 827.6"/>
<path d="M308.3 777.6 L334.1 760.3"/>
<path d="M308.3 793.1 L334.1 775.9"/>
<path d="M308.3 808.6 L334.1 791.4"/>
<path d="M308.3 822.4 L334.1 805.2"/>
<path d="M297.9 767.2 L323.8 753.4"/>
<path d="M310.0 837.1 L334.1 824.1"/>
<ellipse cx="275.5" cy="781.9" rx="6.6" ry="7.2"/>
<ellipse cx="275.5" cy="781.9" rx="4.3" ry="5.2"/>
<path d="M256.6 824.1 L303.1 815.5 L258.3 837.1"/>
<path d="M241.0 781.0 C243.0 785.9 250.2 800.6 253.1 810.3 C256.0 820.1 257.7 828.0 258.3 839.7 C258.9 851.3 256.8 873.3 256.6 880.0"/>
<path d="M230.7 784.5 C233.0 789.4 241.6 804.0 244.5 813.8 C247.4 823.6 248.2 832.1 247.9 843.1 C247.6 854.1 243.6 873.9 242.8 880.0"/>
<path d="M282.4 852.6 C285.3 851.6 293.9 849.1 299.7 846.6 C305.4 844.0 312.3 839.9 316.9 837.1 C321.5 834.2 325.5 830.6 327.2 829.3"/>
<path d="M253.1 862.1 C256.0 860.6 265.2 856.0 270.3 853.4 C275.5 850.9 281.8 847.7 284.1 846.6"/>
<ellipse cx="242.8" cy="857.8" rx="5.2" ry="7.8" transform="rotate(22 242.8 857.8)"/>
<ellipse cx="242.8" cy="857.8" rx="3.1" ry="5.5" transform="rotate(22 242.8 857.8)"/>
<path d="M237.6 853.4 C239.3 852.3 242.5 849.3 247.9 846.6 C253.4 843.8 265.7 838.2 270.3 837.1 C274.9 835.9 276.4 836.9 275.5 839.7 C274.7 842.4 269.2 849.1 265.2 853.4 C261.1 857.8 253.7 863.5 251.4 865.5"/>
<path d="M247.9 848.3 L273.8 837.1"/>
<path d="M253.1 856.9 L275.5 843.1"/>
<path d="M153.1 762.1 L166.9 754.3 L147.1 744.5 L135.9 752.1"/>
<path d="M166.9 754.3 L177.2 755.2 L204.0 742.2 L206.6 746.6 L206.6 750.0"/>
<path d="M177.2 755.2 L191.0 770.7 L206.6 762.1"/>
<path d="M170.3 760.3 L206.6 750.0 L215.2 753.4 L237.6 762.9 L241.0 767.2 L241.0 781.0"/>
<path d="M184.1 769.0 L213.4 753.4"/>
<path d="M191.0 770.7 L204.0 781.0 L227.2 769.0"/>
<path d="M204.0 781.0 L216.9 787.9 L241.0 775.9"/>
<path d="M206.6 793.1 L234.1 779.3"/>
<path d="M213.4 798.3 L241.0 786.2 L251.4 805.2"/>
<path d="M220.3 801.7 L241.0 793.1"/>
<path d="M227.2 808.6 L261.7 796.6 L263.4 805.2"/>
<path d="M230.7 806.0 L253.1 798.3"/>
<path d="M191.0 760.3 C193.6 759.5 201.1 754.6 206.6 755.2 C212.0 755.7 218.0 759.5 223.8 763.8 C229.5 768.1 238.2 778.2 241.0 781.0"/>
<path d="M206.6 787.9 C210.0 790.2 221.5 796.0 227.2 801.7 C233.0 807.5 237.6 815.5 241.0 822.4 C244.5 829.3 246.8 839.7 247.9 843.1"/>
</g>
<g class="w i">
<path d="M146.4 744.7 C144.4 746.1 138.1 749.8 134.3 752.8 C130.5 755.9 126.3 759.2 123.5 762.9 C120.7 766.7 118.0 771.7 117.4 775.1 C116.9 778.5 118.9 780.0 120.1 783.2 C121.4 786.3 124.3 790.4 124.8 794.0 C125.4 797.6 124.7 802.1 123.5 804.8 C122.3 807.5 118.3 808.2 117.4 810.2 C116.5 812.2 117.4 814.0 118.1 816.9 C118.8 819.8 119.9 823.4 121.5 827.7 C123.0 832.0 125.0 837.4 127.5 842.6 C130.1 847.7 133.2 853.6 137.0 858.8 C140.8 863.9 145.3 869.3 150.5 873.6 C155.7 877.9 161.3 880.6 168.0 884.4 C174.8 888.2 183.5 893.4 191.0 896.5 C198.4 899.7 206.3 900.9 212.6 903.3 C218.9 905.7 226.1 909.5 228.8 910.7"/>
<path d="M228.8 910.7 C231.5 908.8 240.2 904.1 245.0 899.2 C249.7 894.4 254.8 886.2 257.1 881.7 C259.3 877.2 259.3 875.9 258.4 872.3 C257.5 868.7 252.8 862.1 251.7 860.1"/>
<path d="M146.4 744.7 L154.5 745.4 L176.1 754.8 L153.2 763.6"/>
<path d="M134.3 752.8 L154.5 762.9 L168.0 757.5"/>
<path d="M153.2 763.6 C156.8 764.2 167.6 763.5 174.8 767.0 C182.0 770.5 190.1 777.3 196.4 784.5 C202.7 791.7 209.2 801.9 212.6 810.2 C215.9 818.5 216.2 826.8 216.6 834.5 C217.1 842.1 217.3 849.3 215.3 856.1 C213.2 862.8 206.3 871.8 204.5 875.0"/>
<path d="M176.1 754.8 C180.0 757.5 192.1 764.5 199.1 771.0 C206.0 777.6 212.6 786.6 218.0 794.0 C223.4 801.4 227.9 807.9 231.5 815.6 C235.1 823.2 237.5 832.2 239.6 839.9 C241.6 847.5 242.9 857.9 243.6 861.5"/>
<ellipse cx="132.3" cy="773.1" rx="3.8" ry="5.9" transform="rotate(-20 132.3 773.1)"/>
<ellipse cx="229.4" cy="828.4" rx="3.8" ry="5.9" transform="rotate(-20 229.4 828.4)"/>
<ellipse cx="229.4" cy="889.8" rx="3.8" ry="5.9" transform="rotate(-20 229.4 889.8)"/>
<ellipse cx="242.9" cy="858.8" rx="4.9" ry="7.0" transform="rotate(25 242.9 858.8)"/>
<ellipse cx="242.9" cy="858.8" rx="3.0" ry="5.1" transform="rotate(25 242.9 858.8)"/>
<ellipse cx="172.8" cy="833.8" rx="41.8" ry="49.3" transform="rotate(-22 172.8 833.8)"/>
<ellipse cx="155.2" cy="846.6" rx="25.6" ry="31.3" transform="rotate(-14 155.2 846.6)"/>
<ellipse cx="155.9" cy="846.6" rx="22.7" ry="28.1" transform="rotate(-14 155.9 846.6)"/>
<ellipse cx="154.5" cy="846.9" rx="26.7" ry="32.4" transform="rotate(-14 154.5 846.9)"/>
<path d="M174.8 803.4 C177.5 806.4 187.1 814.0 191.0 821.0 C194.8 827.9 197.3 838.1 197.7 845.3 C198.2 852.5 196.1 859.2 193.7 864.2 C191.2 869.1 184.7 873.2 182.9 875.0"/>
<path d="M178.8 803.4 C181.7 806.4 192.3 814.0 196.4 821.0 C200.4 827.9 202.7 837.8 203.1 845.3 C203.6 852.7 201.8 860.3 199.1 865.5 C196.4 870.7 188.9 874.5 186.9 876.3"/>
<path d="M185.6 799.4 C188.7 802.5 200.2 810.6 204.5 818.3 C208.7 825.9 210.8 836.7 211.2 845.3 C211.7 853.8 210.1 863.5 207.2 869.6 C204.2 875.6 195.9 879.7 193.7 881.7"/>
<path d="M149.1 802.1 L174.8 802.1 L178.8 803.4 L178.8 811.5 L162.6 819.6 L161.3 812.9 L150.5 803.4"/>
<path d="M174.8 802.1 L174.8 810.2 L162.6 817.6"/>
<ellipse cx="155.9" cy="810.9" rx="3.8" ry="5.1" transform="rotate(-15 155.9 810.9)"/>
<ellipse cx="155.9" cy="810.9" rx="2.2" ry="3.2" transform="rotate(-15 155.9 810.9)"/>
<path d="M146.4 792.6 L161.3 792.0 L162.6 794.0 L153.2 799.4"/>
<path d="M134.3 815.6 L150.5 807.5"/>
</g>
<path class="w" style="stroke-width:2.4;shape-rendering:auto;stroke:#e4e4e4" d="M168.5 873.0 L164.7 874.9 L160.6 876.0 L156.3 876.1 L152.1 875.3 L147.9 873.7 L143.9 871.2 L140.3 868.0 L137.2 864.2 L134.6 859.8 L132.6 855.0 L131.4 849.9 L130.8 844.8 L131.1 839.7 L132.0 834.8"/>
<g class="w">
<path d="M218.0 619.5 L238.0 619.5 L351.4 734.5"/>
<polygon class="f" points="351.4,734.5 345.1,731.5 341.3,727.6 344.7,724.3 348.5,728.1"/>
<path d="M314.0 929.5 L330.0 929.5 L366.9 817.2"/>
<polygon class="f" points="366.9,817.2 367.1,824.2 365.4,829.3 360.9,827.9 362.6,822.7"/>
<path d="M3.0 976.5 L14.0 976.5"/>
<path d="M68.2 962.9 L77.4 972.1 L87.4 962.9"/>
<path d="M77.5 972.0 L77.5 983.0"/>
<path d="M77.5 989.0 L77.5 1099.6"/>
<path d="M70.2 1004.2 L77.4 988.9 L86.6 1004.2"/>
<rect x="69.5" y="1099.5" width="17" height="17"/>
<rect class="f" x="77" y="1107" width="1" height="1"/>
<path d="M86.6 1107.5 L195.7 1107.5"/>
<path d="M181.3 1099.6 L195.7 1107.3 L181.3 1116.5"/>
<path d="M203.4 1097.2 L222.6 1118.5"/>
<path d="M222.6 1097.2 L203.4 1118.5"/>
</g>
<g class="b">
<path d="M314.5 1056.0 L314.5 1063.0"/>
<path d="M606.5 1056.0 L606.5 1063.0"/>
<path d="M1227.5 1056.0 L1227.5 1063.0"/>
<path d="M917.5 1056.0 L917.5 1075.0"/>
<polygon points="917.5,1056 913,1063.5 922,1063.5" style="fill:#0000ff"/>
</g>
<text class="st" x="148.5" y="1067.8" font-size="10">7</text>
<text class="st" x="459.5" y="1064.2" font-size="10">6</text>
<text class="st" x="760.8" y="1066.2" font-size="10">5</text>
<text class="st" x="1060" y="1064.6" font-size="10">4</text>
<text class="ct2" x="273.0" y="788.0" font-size="9" textLength="17.0" lengthAdjust="spacingAndGlyphs">Axis1</text>
<text class="ct2" x="298.0" y="790.0" font-size="9" textLength="18.0" lengthAdjust="spacingAndGlyphs">Axis4</text>
<text class="ct2" x="252.0" y="800.0" font-size="9" textLength="18.0" lengthAdjust="spacingAndGlyphs">Axis2</text>
<text class="ct2" x="160.0" y="872.0" font-size="9" textLength="20.0" lengthAdjust="spacingAndGlyphs">Axis3</text>
<text class="ct" y="273.0" font-size="23"><tspan x="384.2" textLength="44.8" lengthAdjust="spacingAndGlyphs">BOSS</tspan> <tspan x="443.7" textLength="10.3" lengthAdjust="spacingAndGlyphs">H</tspan></text>
<text class="ct" x="361.5" y="464.0" font-size="19.5" textLength="61.1" lengthAdjust="spacingAndGlyphs">1.6500</text>
<text class="ct" x="324.0" y="504.5" font-size="19" textLength="67.0" lengthAdjust="spacingAndGlyphs">2.7304</text>
<text class="ct" x="505.4" y="455.5" font-size="22" textLength="8.4" lengthAdjust="spacingAndGlyphs">E</text>
<text class="ct" x="884.4" y="449.5" font-size="22" textLength="8.2" lengthAdjust="spacingAndGlyphs">E</text>
<text class="ct" x="930.2" y="486.0" font-size="17" textLength="29.2" lengthAdjust="spacingAndGlyphs">2.95</text>
<text class="ct" x="995.7" y="560.3" font-size="18" textLength="28.5" lengthAdjust="spacingAndGlyphs">4.75</text>
<text class="ct" y="568.6" font-size="18"><tspan x="1051.5" textLength="16.9" lengthAdjust="spacingAndGlyphs">3X</tspan> <tspan x="1079.2" textLength="28.2" lengthAdjust="spacingAndGlyphs">4.95</tspan></text>
<text class="ct" x="1142.2" y="575.4" font-size="19.5" textLength="64.1" lengthAdjust="spacingAndGlyphs">4.6138</text>
<text class="ct" x="1003.6" y="862.4" font-size="19.5" textLength="60.5" lengthAdjust="spacingAndGlyphs">0.8000</text>
<text class="ct" y="712.0" font-size="17.3"><tspan x="924.6" textLength="33.6" lengthAdjust="spacingAndGlyphs">BOSS</tspan> <tspan x="968.8" textLength="7.5" lengthAdjust="spacingAndGlyphs">C</tspan></text>
<text class="ct" y="738.0" font-size="17.3"><tspan x="925.4" textLength="33.3" lengthAdjust="spacingAndGlyphs">BOSS</tspan> <tspan x="970.0" textLength="7.6" lengthAdjust="spacingAndGlyphs">A</tspan></text>
<text class="ct" y="899.4" font-size="17.3"><tspan x="942.3" textLength="33.5" lengthAdjust="spacingAndGlyphs">BOSS</tspan> <tspan x="987.7" textLength="6.3" lengthAdjust="spacingAndGlyphs">B</tspan></text>
<text class="ct" y="869.2" font-size="17.3"><tspan x="659.0" textLength="34.0" lengthAdjust="spacingAndGlyphs">BOSS</tspan> <tspan x="704.4" textLength="6.3" lengthAdjust="spacingAndGlyphs">F</tspan></text>
<text class="ct" y="859.5" font-size="17.3"><tspan x="413.2" textLength="33.6" lengthAdjust="spacingAndGlyphs">BOSS</tspan> <tspan x="457.3" textLength="7.1" lengthAdjust="spacingAndGlyphs">E</tspan></text>
<text class="ct" y="623.5" font-size="17.3"><tspan x="156.3" textLength="32.4" lengthAdjust="spacingAndGlyphs">BOSS</tspan> <tspan x="200.1" textLength="8.6" lengthAdjust="spacingAndGlyphs">A</tspan></text>
<text class="ct" y="935.5" font-size="17.3"><tspan x="253.7" textLength="32.7" lengthAdjust="spacingAndGlyphs">BOSS</tspan> <tspan x="297.8" textLength="7.2" lengthAdjust="spacingAndGlyphs">B</tspan></text>
<text class="ct" y="980.5" font-size="17.3"><tspan x="14.8" textLength="34.2" lengthAdjust="spacingAndGlyphs">BOSS</tspan> <tspan x="59.4" textLength="8.0" lengthAdjust="spacingAndGlyphs">H</tspan></text>
<text class="ct2" x="607.7" y="379.0" font-size="10.5" textLength="25.5" lengthAdjust="spacingAndGlyphs">Axis3</text>
<text class="ct2" x="700.1" y="556.2" font-size="10.5" textLength="24.8" lengthAdjust="spacingAndGlyphs">Axis2</text>
<text class="ct2" x="700.1" y="611.5" font-size="10.5" textLength="21.9" lengthAdjust="spacingAndGlyphs">Axis1</text>
<text class="ct2" x="614.2" y="775.4" font-size="10.5" textLength="24.5" lengthAdjust="spacingAndGlyphs">Axis4</text>
</svg>
</div>

<!-- bottom.html -->
<div class="abs" style="left:1px;top:2px;width:2px;height:1330px;background:#e8ecf3"></div>
<div class="abs" style="left:3px;top:1183px;width:1340px;height:15px;background:#f0f0f0"></div>
<svg style="left:0;top:1182px" width="200" height="18" viewBox="0 1182 200 18">
<path d="M60.6 1183 H124 L118.5 1195.2 Q117.6 1197 115.6 1197 H69 Q67 1197 66.1 1195.2 Z" fill="#c6c6c6" stroke="#222" stroke-width="1"/>
<path d="M3 1183 H60.6 L55.1 1195.2 Q54.2 1197 52.2 1197 H11.4 Q9.4 1197 8.5 1195.2 Z" fill="#fff" stroke="#222" stroke-width="1"/>
<rect x="3" y="1182.4" width="57" height="1.6" fill="#fff"/>
<rect x="132.5" y="1184.5" width="20" height="11" fill="#e4e4e4" stroke="#9a9a9a" stroke-width="1"/>
<path d="M138.4 1190 H146.6 M142.5 1186 V1194" stroke="#333" stroke-width="1.2"/>
</svg>
<div class="t" style="left:15.20px;top:1184.00px;font-size:11px;letter-spacing:0.465px;font-weight:bold;">Model</div>
<div class="t" style="left:75.00px;top:1184.00px;font-size:11px;letter-spacing:-0.061px;color:#111;">Sheet1</div>
<div class="abs" style="left:2px;top:1199px;width:1741px;height:1px;background:#d9d9d9"></div>
<div class="abs" style="left:2px;top:1200px;width:1741px;height:1px;background:#b4b4b4"></div>
<div class="abs" style="left:2px;top:1201px;width:1741px;height:2px;background:#8e8e8e"></div>
<div class="abs" style="left:2px;top:1203px;width:1741px;height:22px;background:#c0c0c0"></div>
<div class="abs" style="left:2px;top:1225px;width:1741px;height:1px;background:#6e6e6e"></div>
<div class="t" style="left:7.10px;top:1209.00px;font-size:11.5px;letter-spacing:-0.027px;font-weight:bold;">Command window</div>
<div class="abs" style="left:3px;top:1226px;width:1740px;height:54px;background:#fff;border-left:1px solid #9a9a9a;border-bottom:1px solid #a8a8a8"></div>
<div class="abs" style="left:3px;top:1280px;width:1740px;height:16px;background:#fff"></div>
<div class="t" style="left:8.30px;top:1228.00px;font-size:13px;letter-spacing:-0.107px;color:#111;">Command: Opening "R2007" drawing file</div>
<div class="t" style="left:8.30px;top:1244.00px;font-size:13px;letter-spacing:-0.197px;color:#111;">Command:</div>
<div class="t" style="left:8.30px;top:1260.00px;font-size:13px;letter-spacing:-0.197px;color:#111;">Command:</div>
<div class="t" style="left:7.40px;top:1281.00px;font-size:13px;letter-spacing:-0.210px;color:#111;">Command:</div>
<div class="abs" style="left:1724px;top:1227px;width:17px;height:52px;background:#f0f0f0"></div>
<div class="abs" style="left:1726px;top:1253px;width:14px;height:9px;background:#cdcdcd"></div>
<svg style="left:1700px;top:1203px" width="45" height="80" viewBox="1700 1203 45 80">
<path d="M1728.4 1238.4 H1737.4 L1732.9 1233.6 Z" fill="#111"/><path d="M1728.4 1268 H1737.4 L1732.9 1272.8 Z" fill="#111"/>
<rect x="1704.4" y="1212" width="5.4" height="4.6" fill="none" stroke="#111" stroke-width="1.3"/><path d="M1706.4 1212 V1209.6 H1711.6 V1214 H1710" fill="none" stroke="#111" stroke-width="1.3"/>
<path d="M1726.4 1209.8 L1733.8 1217 M1733.8 1209.8 L1726.4 1217" stroke="#111" stroke-width="1.4"/>
</svg>
<div class="t" style="left:5.60px;top:1308.00px;font-size:12px;letter-spacing:-0.362px;color:#111;">DraftSight 2019 x64</div>
<div class="abs" style="left:634px;top:1299px;width:98px;height:30px;border:1px solid #b9b9b9;box-shadow:inset -1px -1px 0 #fff, 1px 1px 0 #fff"></div>
<div class="abs" style="left:737px;top:1299px;width:254px;height:30px;border:1px solid #b9b9b9;box-shadow:inset -1px -1px 0 #fff, 1px 1px 0 #fff"></div>
<div class="abs" style="left:997px;top:1299px;width:129px;height:30px;border:1px solid #b9b9b9;box-shadow:inset -1px -1px 0 #fff, 1px 1px 0 #fff"></div>
<div class="abs" style="left:602px;top:1302px;width:25px;height:24px;background:#e1e1e1;border:1px solid #adadad"></div>
<div class="abs" style="left:637px;top:1302px;width:25px;height:24px;background:#e1e1e1;border:1px solid #adadad"></div>
<div class="abs" style="left:670px;top:1302px;width:25px;height:24px;background:#e1e1e1;border:1px solid #adadad"></div>
<div class="abs" style="left:703px;top:1302px;width:25px;height:24px;background:#e1e1e1;border:1px solid #adadad"></div>
<div class="abs" style="left:740px;top:1302px;width:25px;height:24px;background:#e1e1e1;border:1px solid #adadad"></div>
<div class="abs" style="left:773px;top:1302px;width:25px;height:24px;background:#cce4f7;border:1.5px solid #0a64ad"></div>
<div class="abs" style="left:806px;top:1302px;width:25px;height:24px;background:#cce4f7;border:1.5px solid #0a64ad"></div>
<div class="abs" style="left:839px;top:1302px;width:25px;height:24px;background:#cce4f7;border:1.5px solid #0a64ad"></div>
<div class="abs" style="left:872px;top:1302px;width:25px;height:24px;background:#cce4f7;border:1.5px solid #0a64ad"></div>
<div class="abs" style="left:905px;top:1304px;width:84px;height:19px;background:#cce4f7;border:1.5px solid #0a64ad"></div>
<div class="t" style="left:911.00px;top:1308.00px;font-size:12px;letter-spacing:-0.304px;color:#111;">Dynamic CCS</div>
<div class="abs" style="left:1000px;top:1304px;width:94px;height:20px;background:#e1e1e1;border:1px solid #adadad"></div>
<div class="t" style="left:1004.30px;top:1308.00px;font-size:12px;letter-spacing:0.172px;color:#111;">Annotation</div>
<div class="t" style="left:1101.40px;top:1308.00px;font-size:12px;letter-spacing:-0.515px;color:#1a1a1a;">(1:1)</div>
<div class="t" style="left:1132.40px;top:1308.00px;font-size:12px;letter-spacing:-0.467px;color:#1a1a1a;">(22.35,-1.00,0.00)</div>
<svg style="left:590px;top:1296px" width="520" height="36" viewBox="590 1296 520 36">
<g fill="none">
<path d="M1075.4 1311.4 H1087 L1081.2 1318 Z" fill="#111"/>
<!-- 1 bolt + layers -->
<path d="M605.6 1309 L607.6 1307.2 H615.4 L617.4 1309 V1311 L615.4 1312.6 H607.6 L605.6 1311 Z" fill="#8fb0d4" stroke="#1f2a36" stroke-width="1"/>
<path d="M609.2 1312.6 V1320.6 Q611.6 1322.4 614 1320.6 V1312.6" fill="#9ab6d6" stroke="#1f2a36" stroke-width="1"/>
<path d="M609.4 1315 H613.8 M609.4 1317.2 H613.8 M609.4 1319.4 H613.8" stroke="#1f2a36" stroke-width=".8"/>
<path d="M611.8 1320.2 L617.2 1317.6 L622.8 1320.2 L617.2 1322.8 Z" fill="#f2c200" stroke="#c49a00" stroke-width=".6"/>
<path d="M611.8 1317 L617.2 1314.4 L622.8 1317 L617.2 1319.6 Z" fill="#ffd21a" stroke="#c49a00" stroke-width=".6"/>
<!-- 2 snap grid -->
<path d="M642 1306 V1323 M646.4 1306 V1323 M650.8 1306 V1323 M655.2 1306 V1323 M640.4 1308.2 H657 M640.4 1312.6 H657 M640.4 1317 H657 M640.4 1321.4 H657" stroke="#9fc3d6" stroke-width=".9"/>
<circle cx="644" cy="1310" r="2.2" fill="#cc1122"/>
<path d="M646.4 1310.6 V1321.8 L649 1319.4 L651 1323.8 L653 1322.8 L651 1318.6 L654.8 1318.4 Z" fill="#fff" stroke="#222" stroke-width="1"/>
<!-- 3 grid -->
<path d="M676.7 1305.6 V1323 M681 1305.6 V1323 M685.3 1305.6 V1323 M689.6 1305.6 V1323 M674.4 1308.6 H691.4 M674.4 1313 H691.4 M674.4 1317.4 H691.4 M674.4 1321.6 H691.4" stroke="#000" stroke-width="1.7"/>
<!-- 4 ortho trapezoid -->
<path d="M708.6 1309.6 L720.8 1306.2 V1320.9 L708.6 1317.6 Z" stroke="#222" stroke-width="1.2"/>
<path d="M706 1313.5 H724" stroke="#222" stroke-width="1.2" stroke-dasharray="4.6 1.4 1.4 1.4"/>
<!-- 5 polar -->
<circle cx="748.5" cy="1314" r="5.6" stroke="#222" stroke-width="1.2"/>
<path d="M757.8 1305.2 L751 1312 M751.6 1315.6 L757.8 1321.8 M749.5 1305.8 V1308.6" stroke="#1a8fe0" stroke-width="1"/>
<path d="M754.4 1313.6 H761" stroke="#1a8fe0" stroke-width="1.1" stroke-dasharray="2.4 1.6"/>
<path d="M749 1311 L752.4 1314.6 L749.4 1314.2 Z" fill="#1a8fe0" stroke="#1a8fe0" stroke-width=".6"/>
<!-- 6 etrack -->
<path d="M781.6 1308.6 H778.2 V1314.8 H781.6 M778.2 1311.6 H781" stroke="#1a8fe0" stroke-width="1.2"/>
<path d="M793.5 1306.8 V1316" stroke="#7a8a98" stroke-width="1" stroke-dasharray="2.4 1.4"/>
<path d="M778.2 1322.3 H791" stroke="#222" stroke-width="1.2" stroke-dasharray="3.6 1.2 1.2 1.2"/>
<path d="M783.2 1307.8 V1319 L785.8 1316.6 L787.8 1321 L789.8 1320 L787.8 1315.8 L791.6 1315.6 Z" fill="#fff" stroke="#222" stroke-width="1"/>
<circle cx="792.8" cy="1321.2" r="2.2" fill="#cc1122"/>
<!-- 7 lineweight ladder -->
<path d="M814.7 1308.6 H811.2 V1314.8 H814.7 M811.2 1311.6 H814" stroke="#1a8fe0" stroke-width="1.2"/>
<path d="M819.2 1309.2 H823 M818 1312.2 H824.2 M816.6 1315.2 H825.4" stroke="#222" stroke-width="1"/><path d="M815.4 1318.4 H826.4 M814.2 1321.8 H827" stroke="#222" stroke-width="1.4"/>
<path d="M819.2 1309 L816.2 1322 M823 1309 L825.6 1322" stroke="#7a8a98" stroke-width=".8"/>
<!-- 8 quick input -->
<rect x="844.4" y="1307.6" width="16.4" height="15" rx="3" stroke="#222" stroke-width="1.4" stroke-dasharray="3.4 1.6"/>
<path d="M847.6 1310.8 H854 L857.6 1315 V1319.4 H847.6 Z" stroke="#222" stroke-width="1.2"/>
<!-- 9 selection cycling -->
<rect x="883.6" y="1313.6" width="9" height="8.8" stroke="#222" stroke-width="1.3"/>
<rect x="886.4" y="1307.2" width="3.6" height="2.4" fill="#1a8fe0"/><rect x="877" y="1316.2" width="2.8" height="3.6" fill="#1a8fe0"/>
<path d="M883.6 1310.6 Q884.4 1308.6 886.2 1308.4 M890.4 1308.4 Q892.2 1308.6 892.8 1310.4 M880.6 1314 Q878.6 1314.2 878.4 1316 M878.4 1320.2 Q878.8 1322 880.6 1322.2" stroke="#8a9aa8" stroke-width="1" stroke-dasharray="2 1.2"/>
</g>
</svg>
<svg style="left:1728px;top:1318px" width="14" height="14" viewBox="0 0 14 14"><g fill="#bdbdbd"><rect x="10" y="2" width="2" height="2"/><rect x="6" y="6" width="2" height="2"/><rect x="10" y="6" width="2" height="2"/><rect x="2" y="10" width="2" height="2"/><rect x="6" y="10" width="2" height="2"/><rect x="10" y="10" width="2" height="2"/></g></svg>
<div class="abs" style="left:0px;top:1332px;width:1745px;height:2px;background:#12306a"></div>

<!-- props.html -->
<div class="abs" style="left:1343px;top:165px;width:2px;height:1033px;background:#f0f0f0"></div>
<div class="abs" style="left:1345px;top:165px;width:2px;height:1033px;background:#6a6a6a"></div>
<div class="abs" style="left:1697px;top:165px;width:24px;height:1032px;background:#c0c0c0;border:1px solid #8e8e8e"></div>
<div class="abs" style="left:1721px;top:166px;width:21px;height:260px;background:#f0f0f0"></div>
<div class="abs" style="left:1721px;top:168px;width:21px;height:1px;background:#dcdcdc"></div>
<div class="abs" style="left:1741px;top:168px;width:1px;height:183px;background:#dcdcdc"></div>
<div class="abs" style="left:1721px;top:241px;width:21px;height:1px;background:#dcdcdc"></div>
<div class="abs" style="left:1721px;top:350px;width:21px;height:76px;background:#fff;border-bottom:1px solid #dcdcdc;border-right:1px solid #e6e6e6"></div>
<div class="t" style="left:1724.41px;top:230.00px;font-size:11px;letter-spacing:-0.620px;transform-origin:0 0;transform:rotate(-90deg);">HomeByMe</div>
<div class="t" style="left:1724.41px;top:340.00px;font-size:11px;letter-spacing:-0.266px;transform-origin:0 0;transform:rotate(-90deg);">G-code Generator</div>
<div class="t" style="left:1724.41px;top:413.70px;font-size:11px;letter-spacing:-0.044px;transform-origin:0 0;transform:rotate(-90deg);">Properties</div>
<div class="t" style="left:1703.01px;top:1171.00px;font-size:11px;letter-spacing:0.409px;transform-origin:0 0;transform:rotate(-90deg);font-weight:bold;">Properties</div>
<div class="abs" style="left:1359px;top:176px;width:327px;height:20px;background:#fff;border:1px solid #8a8a8a;box-shadow:inset 0 0 0 1px #c6c6c6"></div>
<div class="abs" style="left:1669px;top:177px;width:16px;height:18px;background:#dedede;border:1px solid #b0b0b0"></div>
<div class="t" style="left:1360.70px;top:181.00px;font-size:11px;letter-spacing:-0.223px;">No Selection</div>
<div class="abs" style="left:1360px;top:203px;width:25px;height:24px;background:#e1e1e1;border:1px solid #adadad"></div>
<div class="abs" style="left:1393px;top:203px;width:25px;height:24px;background:#e1e1e1;border:1px solid #adadad"></div>
<div class="abs" style="left:1426px;top:203px;width:25px;height:24px;background:#e1e1e1;border:1px solid #adadad"></div>
<div class="abs" style="left:1459px;top:203px;width:25px;height:24px;background:#e1e1e1;border:1px solid #adadad"></div>
<div class="abs" style="left:1492px;top:203px;width:25px;height:24px;background:#e1e1e1;border:1px solid #adadad"></div>
<div class="abs" style="left:1359px;top:234px;width:327px;height:953px;border:1px solid #a0a0a0;box-shadow:inset 1px 1px 0 #fff"></div>
<div class="abs" style="left:1370px;top:245px;width:288px;height:20px;background:#e0e4fc;border:1px solid #b4b4b4;box-shadow:inset 0 0 0 1px #eef0ff"></div>
<div class="t" style="left:1375.00px;top:250.00px;font-size:11px;letter-spacing:0.433px;font-weight:bold;">General</div>
<svg style="left:1642px;top:251px" width="11" height="7" viewBox="0 0 11 7"><path d="M0.6 6 H10.2 L5.4 0.8 Z" fill="#000"/></svg>
<div class="abs" style="left:1370px;top:265px;width:288px;height:165px;border:1px solid #dcdcdc;border-top:none"></div>
<div class="abs" style="left:1409px;top:278px;width:249px;height:20px;background:#fff;border:1px solid #8a8a8a;box-shadow:inset 0 0 0 1px #c6c6c6"></div>
<div class="abs" style="left:1409px;top:300px;width:249px;height:20px;background:#fff;border:1px solid #8a8a8a;box-shadow:inset 0 0 0 1px #c6c6c6"></div>
<div class="abs" style="left:1641px;top:301px;width:16px;height:18px;background:#dedede;border:1px solid #b0b0b0"></div>
<svg style="left:1644px;top:307px" width="10" height="7" viewBox="0 0 10 7"><path d="M1 1.2 L5 5.2 L9 1.2" fill="none" stroke="#444" stroke-width="1.1"/></svg>
<div class="t" style="left:1411.50px;top:305.00px;font-size:11px;letter-spacing:-0.118px;">0</div>
<div class="abs" style="left:1409px;top:322px;width:249px;height:20px;background:#fff;border:1px solid #8a8a8a;box-shadow:inset 0 0 0 1px #c6c6c6"></div>
<div class="abs" style="left:1641px;top:323px;width:16px;height:18px;background:#dedede;border:1px solid #b0b0b0"></div>
<svg style="left:1644px;top:329px" width="10" height="7" viewBox="0 0 10 7"><path d="M1 1.2 L5 5.2 L9 1.2" fill="none" stroke="#444" stroke-width="1.1"/></svg>
<div class="t" style="left:1431.50px;top:327.00px;font-size:11px;letter-spacing:-0.279px;">ByLayer</div>
<div class="abs" style="left:1409px;top:344px;width:249px;height:20px;background:#fff;border:1px solid #8a8a8a;box-shadow:inset 0 0 0 1px #c6c6c6"></div>
<div class="t" style="left:1412.50px;top:349.00px;font-size:11px;letter-spacing:-0.153px;">1.00</div>
<div class="abs" style="left:1409px;top:366px;width:249px;height:20px;background:#fff;border:1px solid #8a8a8a;box-shadow:inset 0 0 0 1px #c6c6c6"></div>
<div class="abs" style="left:1641px;top:367px;width:16px;height:18px;background:#dedede;border:1px solid #b0b0b0"></div>
<svg style="left:1644px;top:373px" width="10" height="7" viewBox="0 0 10 7"><path d="M1 1.2 L5 5.2 L9 1.2" fill="none" stroke="#444" stroke-width="1.1"/></svg>
<div class="t" style="left:1411.50px;top:371.00px;font-size:11px;letter-spacing:-0.175px;">Continuous</div>
<div class="t" style="left:1480.50px;top:371.00px;font-size:11px;letter-spacing:-0.384px;">Solid line</div>
<div class="abs" style="left:1409px;top:388px;width:249px;height:20px;background:#fff;border:1px solid #8a8a8a;box-shadow:inset 0 0 0 1px #c6c6c6"></div>
<div class="abs" style="left:1641px;top:389px;width:16px;height:18px;background:#dedede;border:1px solid #b0b0b0"></div>
<svg style="left:1644px;top:395px" width="10" height="7" viewBox="0 0 10 7"><path d="M1 1.2 L5 5.2 L9 1.2" fill="none" stroke="#444" stroke-width="1.1"/></svg>
<div class="t" style="left:1447.00px;top:393.00px;font-size:11px;letter-spacing:-0.193px;">ByLayer</div>
<div class="abs" style="left:1413px;top:398px;width:32px;height:1px;background:#111"></div>
<div class="abs" style="left:1409px;top:410px;width:249px;height:20px;background:#fff;border:1px solid #8a8a8a;box-shadow:inset 0 0 0 1px #c6c6c6"></div>
<div class="t" style="left:1411.50px;top:415.00px;font-size:11px;letter-spacing:-0.265px;">ByLayer</div>
<div class="abs" style="left:1370px;top:437px;width:288px;height:20px;background:#e0e4fc;border:1px solid #b4b4b4;box-shadow:inset 0 0 0 1px #eef0ff"></div>
<div class="t" style="left:1375.00px;top:442.00px;font-size:11px;letter-spacing:0.565px;font-weight:bold;">PrintStyle</div>
<svg style="left:1642px;top:443px" width="11" height="7" viewBox="0 0 11 7"><path d="M0.6 6 H10.2 L5.4 0.8 Z" fill="#000"/></svg>
<div class="abs" style="left:1370px;top:457px;width:288px;height:99px;border:1px solid #dcdcdc;border-top:none"></div>
<div class="abs" style="left:1409px;top:470px;width:249px;height:20px;background:#fff;border:1px solid #8a8a8a;box-shadow:inset 0 0 0 1px #c6c6c6"></div>
<div class="abs" style="left:1641px;top:471px;width:16px;height:18px;background:#dedede;border:1px solid #b0b0b0"></div>
<svg style="left:1644px;top:477px" width="10" height="7" viewBox="0 0 10 7"><path d="M1 1.2 L5 5.2 L9 1.2" fill="none" stroke="#444" stroke-width="1.1"/></svg>
<div class="t" style="left:1411.50px;top:475.00px;font-size:11px;letter-spacing:-0.781px;">No</div>
<div class="abs" style="left:1409px;top:492px;width:249px;height:20px;background:#fff;border:1px solid #8a8a8a;box-shadow:inset 0 0 0 1px #c6c6c6"></div>
<div class="abs" style="left:1641px;top:493px;width:16px;height:18px;background:#dedede;border:1px solid #b0b0b0"></div>
<svg style="left:1644px;top:499px" width="10" height="7" viewBox="0 0 10 7"><path d="M1 1.2 L5 5.2 L9 1.2" fill="none" stroke="#444" stroke-width="1.1"/></svg>
<div class="t" style="left:1411.50px;top:497.00px;font-size:11px;letter-spacing:-0.449px;">None</div>
<div class="abs" style="left:1409px;top:514px;width:249px;height:20px;background:#dfe3ee;border:1px solid #a9a9a9;box-shadow:inset 0 0 0 1px #b9cbe4"></div>
<div class="abs" style="left:1641px;top:515px;width:16px;height:18px;background:#d6d6d6;border:1px solid #c2c2c2"></div>
<svg style="left:1644px;top:521px" width="10" height="7" viewBox="0 0 10 7"><path d="M1 1.2 L5 5.2 L9 1.2" fill="none" stroke="#a8a8a8" stroke-width="1.1"/></svg>
<div class="t" style="left:1411.50px;top:519.00px;font-size:11px;letter-spacing:-0.375px;color:#8a8a8a;">ByColor</div>
<div class="abs" style="left:1409px;top:536px;width:249px;height:20px;background:#b1cdeb;border:1px solid #9ab4d2"></div>
<div class="t" style="left:1411.50px;top:541.00px;font-size:11px;letter-spacing:-0.449px;">None</div>
<div class="abs" style="left:1370px;top:563px;width:288px;height:20px;background:#e0e4fc;border:1px solid #b4b4b4;box-shadow:inset 0 0 0 1px #eef0ff"></div>
<div class="t" style="left:1375.00px;top:568.00px;font-size:11px;letter-spacing:0.283px;font-weight:bold;">View</div>
<svg style="left:1642px;top:569px" width="11" height="7" viewBox="0 0 11 7"><path d="M0.6 6 H10.2 L5.4 0.8 Z" fill="#000"/></svg>
<div class="abs" style="left:1370px;top:583px;width:288px;height:121px;border:1px solid #dcdcdc;border-top:none"></div>
<div class="abs" style="left:1409px;top:596px;width:249px;height:20px;background:#b1cdeb;border:1px solid #9ab4d2"></div>
<div class="t" style="left:1412.50px;top:601.00px;font-size:11px;letter-spacing:-0.106px;">13.78</div>
<div class="abs" style="left:1409px;top:618px;width:249px;height:20px;background:#b1cdeb;border:1px solid #9ab4d2"></div>
<div class="t" style="left:1412.50px;top:623.00px;font-size:11px;letter-spacing:-0.078px;">5.29</div>
<div class="abs" style="left:1409px;top:640px;width:249px;height:20px;background:#b1cdeb;border:1px solid #9ab4d2"></div>
<div class="t" style="left:1412.50px;top:645.00px;font-size:11px;letter-spacing:-0.078px;">0.00</div>
<div class="abs" style="left:1409px;top:662px;width:249px;height:20px;background:#b1cdeb;border:1px solid #9ab4d2"></div>
<div class="t" style="left:1412.50px;top:667.00px;font-size:11px;letter-spacing:0.058px;">11.15</div>
<div class="abs" style="left:1409px;top:684px;width:249px;height:20px;background:#b1cdeb;border:1px solid #9ab4d2"></div>
<div class="t" style="left:1412.50px;top:689.00px;font-size:11px;letter-spacing:-0.106px;">17.80</div>
<div class="abs" style="left:1370px;top:711px;width:288px;height:20px;background:#e0e4fc;border:1px solid #b4b4b4;box-shadow:inset 0 0 0 1px #eef0ff"></div>
<div class="t" style="left:1375.00px;top:716.00px;font-size:11px;letter-spacing:0.136px;font-weight:bold;">Misc</div>
<svg style="left:1642px;top:717px" width="11" height="7" viewBox="0 0 11 7"><path d="M0.6 6 H10.2 L5.4 0.8 Z" fill="#000"/></svg>
<div class="abs" style="left:1370px;top:731px;width:288px;height:121px;border:1px solid #dcdcdc;border-top:none"></div>
<div class="abs" style="left:1409px;top:744px;width:249px;height:20px;background:#fff;border:1px solid #8a8a8a;box-shadow:inset 0 0 0 1px #c6c6c6"></div>
<div class="abs" style="left:1641px;top:745px;width:16px;height:18px;background:#dedede;border:1px solid #b0b0b0"></div>
<svg style="left:1644px;top:751px" width="10" height="7" viewBox="0 0 10 7"><path d="M1 1.2 L5 5.2 L9 1.2" fill="none" stroke="#444" stroke-width="1.1"/></svg>
<div class="t" style="left:1412.50px;top:749.00px;font-size:11px;letter-spacing:-0.164px;">1:1</div>
<div class="abs" style="left:1409px;top:766px;width:249px;height:20px;background:#fff;border:1px solid #8a8a8a;box-shadow:inset 0 0 0 1px #c6c6c6"></div>
<div class="abs" style="left:1641px;top:767px;width:16px;height:18px;background:#dedede;border:1px solid #b0b0b0"></div>
<svg style="left:1644px;top:773px" width="10" height="7" viewBox="0 0 10 7"><path d="M1 1.2 L5 5.2 L9 1.2" fill="none" stroke="#444" stroke-width="1.1"/></svg>
<div class="t" style="left:1411.50px;top:771.00px;font-size:11px;letter-spacing:-0.382px;">Yes</div>
<div class="abs" style="left:1409px;top:788px;width:249px;height:20px;background:#fff;border:1px solid #8a8a8a;box-shadow:inset 0 0 0 1px #c6c6c6"></div>
<div class="abs" style="left:1641px;top:789px;width:16px;height:18px;background:#dedede;border:1px solid #b0b0b0"></div>
<svg style="left:1644px;top:795px" width="10" height="7" viewBox="0 0 10 7"><path d="M1 1.2 L5 5.2 L9 1.2" fill="none" stroke="#444" stroke-width="1.1"/></svg>
<div class="t" style="left:1411.50px;top:793.00px;font-size:11px;letter-spacing:-0.781px;">No</div>
<div class="abs" style="left:1409px;top:810px;width:249px;height:20px;background:#fff;border:1px solid #8a8a8a;box-shadow:inset 0 0 0 1px #c6c6c6"></div>
<div class="abs" style="left:1641px;top:811px;width:16px;height:18px;background:#dedede;border:1px solid #b0b0b0"></div>
<svg style="left:1644px;top:817px" width="10" height="7" viewBox="0 0 10 7"><path d="M1 1.2 L5 5.2 L9 1.2" fill="none" stroke="#444" stroke-width="1.1"/></svg>
<div class="t" style="left:1411.50px;top:815.00px;font-size:11px;letter-spacing:-0.382px;">Yes</div>
<div class="abs" style="left:1409px;top:832px;width:249px;height:20px;background:#b1cdeb;border:1px solid #9ab4d2"></div>
<div class="t" style="left:1499.80px;top:207.00px;font-size:17.5px;font-weight:bold;color:#1a1a1a;">?</div>
<div class="t" style="left:1392.60px;top:608.00px;font-size:7.5px;font-weight:bold;color:#222;">X</div>
<div class="t" style="left:1392.60px;top:630.00px;font-size:7.5px;font-weight:bold;color:#222;">Y</div>
<div class="t" style="left:1392.80px;top:652.00px;font-size:7.5px;font-weight:bold;color:#222;">Z</div>
<div class="t" style="left:1382.60px;top:745.00px;font-size:18px;color:#111;-webkit-text-stroke:.4px #111;">A</div>
<div class="t" style="left:1389.00px;top:789.00px;font-size:6.5px;letter-spacing:0.088px;color:#222;">0.0</div>
<div class="t" style="left:1390.80px;top:832.00px;font-size:9.5px;font-weight:bold;color:#222;">A</div>
<svg style="left:1350px;top:165px" width="395" height="1035" viewBox="1350 165 395 1035">
<g fill="none">
<path d="M1672.4 184 L1676.8 188.4 L1681.2 184" stroke="#444" stroke-width="1.1"/>
<path d="M1704.4 172.6 L1711.6 179 M1711.6 172.6 L1704.4 179" stroke="#111" stroke-width="1.5"/>
<path d="M1705.6 194 H1712.4 M1704 200.6 H1714 M1709 201 V207.6" stroke="#111" stroke-width="1.5"/><rect x="1706.6" y="194" width="4.8" height="6.4" fill="#111"/>
<!-- tool button 1 -->
<rect x="1362.6" y="205.4" width="19.6" height="19.2" stroke="#a9c0cf" stroke-width="1" stroke-dasharray="3.4 2.2"/>
<circle cx="1371.2" cy="217" r="4.9" stroke="#1a8fe0" stroke-width="1.3"/><rect x="1364.6" y="215.2" width="8.2" height="7" stroke="#f7a900" stroke-width="1.4"/>
<path d="M1372.6 207.8 H1376 Q1378.2 207.8 1378.2 210 V212" stroke="#3aa83a" stroke-width="1.6"/><path d="M1375 211.4 H1381.4 L1378.2 215 Z" fill="#3aa83a"/>
<!-- tool button 2 -->
<path d="M1397.6 206.6 V218 L1400 215.8 M1401.6 207.6 V219 L1404 216.8" stroke="#9fb4c8" stroke-width="1"/>
<path d="M1404.4 209.8 V221 L1407 218.6 L1409 223 L1411 222 L1409 217.8 L1412.8 217.6 Z" fill="#fff" stroke="#222" stroke-width="1"/>
<!-- tool button 3 -->
<rect x="1431" y="207.6" width="14.4" height="14.6" stroke="#1a8fe0" stroke-width="1.2" stroke-dasharray="3.6 2.2"/>
<path d="M1437.6 210.4 V221.6 L1440.2 219.2 L1442.2 223.6 L1444.2 222.6 L1442.2 218.4 L1446 218.2 Z" fill="#fff" stroke="#222" stroke-width="1"/>
<!-- tool button 4 -->
<path d="M1463 207.6 H1465.6 M1467.6 207.6 H1477 M1463 211.6 H1465.6 M1467.6 211.6 H1477 M1463 215.6 H1465.6 M1467.6 215.6 H1473" stroke="#1a8fe0" stroke-width="1.1"/>
<path d="M1476 214 H1480.8 L1478 218 H1480.4 L1474.4 224.4 L1476 219.4 H1473.6 Z" fill="#f5b800" stroke="#8a6a00" stroke-width=".5"/>
<!-- general rows -->
<g transform="translate(1389.2 287.8) rotate(-32)"><rect x="-7.4" y="-2.6" width="8.6" height="5.2" rx="2.4" stroke="#1a8fe0" stroke-width="1.3"/><rect x="-1.2" y="-2.6" width="8.6" height="5.2" rx="2.4" stroke="#1a8fe0" stroke-width="1.3"/></g>
<g stroke="#c49a00" stroke-width=".5"><path d="M1382.4 313.4 L1389.2 310.6 L1396 313.4 L1389.2 316.2 Z" fill="#f2c200"/><path d="M1382.4 310 L1389.2 307.2 L1396 310 L1389.2 312.8 Z" fill="#f7c800"/><path d="M1382.4 306.6 L1389.2 303.8 L1396 306.6 L1389.2 309.4 Z" fill="#ffd21a"/></g>
<path d="M1382.4 332 L1388.6 326.4 L1394.6 332 L1388.4 337.6 Z" fill="#7d95ad" stroke="#1f2a36" stroke-width="1"/><path d="M1385 326.2 L1389.6 331" stroke="#1f2a36" stroke-width="1"/><circle cx="1388.4" cy="330.4" r="1.2" fill="#fff"/>
<path d="M1393.8 331.6 Q1396.4 335 1393.8 336.6 Q1391 335 1393.8 331.6 Z" fill="#1a8fe0" stroke="#1a8fe0" stroke-width=".8"/>
<path d="M1381.6 347.4 H1387 M1391.4 347.4 H1396.8" stroke="#333" stroke-width="1.1"/><path d="M1381.6 352 H1384.4 M1387.4 352 H1391 M1394 352 H1396.8" stroke="#888" stroke-width="1.2"/>
<path d="M1381.6 356.4 H1396.8" stroke="#333" stroke-width="1" stroke-dasharray="1.6 1.6"/><path d="M1381.6 361 H1396.8" stroke="#888" stroke-width="1.6" stroke-dasharray=".8 1.2"/>
<path d="M1381.6 369.6 H1396.8" stroke="#555" stroke-width="1.1"/><path d="M1381.6 374 H1384.4 M1386.6 374 H1392 M1394 374 H1396.8" stroke="#888" stroke-width="1.2"/>
<path d="M1381.6 378.4 H1384 M1385.4 378.4 H1386.2 M1388 378.4 H1391 M1392.4 378.4 H1393.2 M1394.6 378.4 H1396.8" stroke="#888" stroke-width="1.2"/><path d="M1381.6 382.6 H1388 M1390.2 382.6 H1396.8" stroke="#555" stroke-width="1.1"/>
<path d="M1382.2 392.8 H1396" stroke="#1a1a1a" stroke-width="3"/><path d="M1382.2 397.4 H1396" stroke="#1a1a1a" stroke-width="2.4"/><path d="M1382.2 401.4 H1396" stroke="#1a1a1a" stroke-width="1.6"/><path d="M1382.2 404.4 H1396" stroke="#333" stroke-width=".9"/>
<g fill="#8ea5bd"><rect x="1381.6" y="412.8" width="4.6" height="4.4"/><rect x="1391.8" y="412.8" width="4.6" height="4.4"/><rect x="1386.6" y="417.8" width="4.8" height="4.6"/><rect x="1381.6" y="423" width="4.6" height="4.4"/><rect x="1391.8" y="423" width="4.6" height="4.4"/></g>
<g fill="#fafafa"><rect x="1386.6" y="412.8" width="4.8" height="4.4"/><rect x="1381.6" y="417.8" width="4.6" height="4.6"/><rect x="1391.8" y="417.8" width="4.6" height="4.6"/><rect x="1386.6" y="423" width="4.8" height="4.4"/></g>
<!-- bylayer circle --><circle cx="1421" cy="331.8" r="4.6" fill="#fff" stroke="#333" stroke-width="1"/>
<!-- printstyle rows -->
<path d="M1380.2 479.8 A9 9 0 0 1 1398 479.8" stroke="#7cc0e8" stroke-width="1"/><path d="M1380.2 479.8 A9 9 0 0 0 1398 479.8" stroke="#7f9cb6" stroke-width="1"/>
<path d="M1379.4 479.8 H1398.8" stroke="#4a6a86" stroke-width="1.8"/><path d="M1389.1 475.4 V484.4" stroke="#8cc63f" stroke-width="1.3"/><path d="M1386.8 476.4 L1389.1 473.6 L1391.4 476.4 Z M1386.8 483.4 L1389.1 486.2 L1391.4 483.4 Z" fill="#8cc63f"/>
<rect x="1380.4" y="493.4" width="11.6" height="12" rx="1" fill="#fff" stroke="#222" stroke-width="1"/><rect x="1381" y="494" width="10.4" height="2.2" fill="#1a8fe0"/><rect x="1382" y="497.4" width="2" height="6.6" fill="#c41425"/><rect x="1385" y="497.4" width="2.2" height="6.6" fill="#8cc63f"/><path d="M1389.4 497.6 Q1388.4 499 1389.4 500.4 Q1390.4 501.8 1389.4 503.6" stroke="#1a8fe0" stroke-width="1.1"/>
<path d="M1397.6 494.6 L1392.6 503.6" stroke="#f7a900" stroke-width="2.6" stroke-linecap="round"/><path d="M1392.4 504 L1391.4 505.8" stroke="#9aa8b4" stroke-width="2.4"/><path d="M1391.8 505.8 Q1391.2 509.6 1386 510.8 Q1388.8 508.4 1389.6 505 Z" fill="#1a1a1a"/>
<rect x="1380.2" y="515.2" width="3.8" height="13.2" fill="#c41425"/><rect x="1385.4" y="515.2" width="3.4" height="13.2" fill="#3aa83a"/><path d="M1390.4 515.4 H1394.8 V528 H1390.4 Z" stroke="#1a8fe0" stroke-width="1" stroke-dasharray="1.4 1.2"/><path d="M1390.6 519 L1394 515.6 M1391 523 L1394.6 519.4 M1391.4 527 L1394.6 523.8" stroke="#1a8fe0" stroke-width="1"/>
<path d="M1397.4 516.2 L1392.2 525.4" stroke="#f7a900" stroke-width="2.6" stroke-linecap="round"/><path d="M1392 525.8 L1391 527.6" stroke="#9aa8b4" stroke-width="2.4"/><path d="M1391.4 527.6 Q1390.8 531.4 1385.6 532.6 Q1388.4 530.2 1389.2 526.8 Z" fill="#1a1a1a"/>
<path d="M1380.2 537.4 H1384 V550.6 L1380.2 554 Z" fill="#c41425"/><path d="M1386.8 537.4 H1390.6 V544 L1386.8 547.6 Z" fill="#3aa83a"/><path d="M1393.2 537.4 H1397.6 L1393.2 541.6 Z" fill="#1a8fe0"/>
<path d="M1395 540.6 L1397.8 538.2 V541.4 H1394.4 Z M1391 544.6 H1397.8 M1387.6 548.6 H1397.8 M1383.6 552.8 H1397.8" stroke="#111" stroke-width="1.7" fill="#111"/>
<!-- view rows -->
<g stroke="#333" stroke-width="1.1"><path d="M1396.8 606.4 A7.9 7.9 0 1 0 1390.2 613.8"/><path d="M1396.8 628.4 A7.9 7.9 0 1 0 1390.2 635.8"/><path d="M1396.8 650.4 A7.9 7.9 0 1 0 1390.2 657.8"/></g>
<circle cx="1388.9" cy="606" r="1.9" fill="#e0a800"/><circle cx="1388.9" cy="628" r="1.9" fill="#e0a800"/><circle cx="1388.9" cy="650" r="1.9" fill="#e0a800"/>
<path d="M1385.2 663.6 H1393 M1385.2 679.8 H1393" stroke="#7a7a7a" stroke-width="1.3"/><path d="M1389.1 666 V677.6" stroke="#1a8fe0" stroke-width="1.1"/><path d="M1387.2 667.4 L1389.1 664.8 L1391 667.4 Z M1387.2 676.2 L1389.1 678.8 L1391 676.2 Z" fill="#1a8fe0"/>
<path d="M1381 689.8 V697.6 M1397.4 689.8 V697.6" stroke="#7a7a7a" stroke-width="1.3"/><path d="M1384 693.8 H1394.6" stroke="#1a8fe0" stroke-width="1.1"/><path d="M1385.2 691.8 L1382.6 693.8 L1385.2 695.8 Z M1393.2 691.8 L1395.8 693.8 L1393.2 695.8 Z" fill="#1a8fe0"/>
<!-- misc rows -->
<rect x="1380.4" y="767.4" width="17" height="17.2" rx="2" fill="#f4f4f4" stroke="#7cc0f0" stroke-width="1.3"/>
<g stroke="#1f2a36" stroke-width="1.2">
<path d="M1387.5 777.6 V770.6 M1387.5 777.6 H1394.6 M1387.5 777.6 L1383.8 781.4"/>
<path d="M1384.8 802.3 V793.4 M1384.8 802.3 H1394 M1384.8 802.3 L1380.8 806.4"/>
<path d="M1384.8 824.3 V815.4 M1384.8 824.3 H1394 M1384.8 824.3 L1380.8 828.4"/>
<path d="M1384.8 845.9 V837 M1384.8 845.9 H1394 M1384.8 845.9 L1380.8 850"/>
</g>
<g fill="#1f2a36"><path d="M1385.9 771.6 L1387.5 769.4 L1389.1 771.6 Z M1393.6 776 L1395.8 777.6 L1393.6 779.2 Z"/><rect x="1382.8" y="780.4" width="2" height="2"/>
<path d="M1383.2 794.4 L1384.8 792.2 L1386.4 794.4 Z M1393 800.7 L1395.2 802.3 L1393 803.9 Z M1380 804.6 V807.4 H1382.8 Z"/>
<path d="M1383.2 816.4 L1384.8 814.2 L1386.4 816.4 Z M1393 822.7 L1395.2 824.3 L1393 825.9 Z M1380 826.6 V829.4 H1382.8 Z"/>
<path d="M1383.2 838 L1384.8 835.8 L1386.4 838 Z M1393 844.3 L1395.2 845.9 L1393 847.5 Z M1380 848.2 V851 H1382.8 Z"/></g>
<circle cx="1394.4" cy="814.4" r="2.7" fill="#2ca02c"/>
<!-- bottom of grey bar icon -->
<rect x="1701.6" y="1181" width="2.6" height="3.4" fill="#f2c200"/><rect x="1705.6" y="1181" width="2.6" height="3.4" fill="#d4343f"/><rect x="1709.8" y="1181" width="2.6" height="3.4" fill="#4caf50"/>
<path d="M1701.4 1187.6 H1707.6" stroke="#445" stroke-width="1" stroke-dasharray="1.6 .8"/><path d="M1701.4 1191.6 H1707.6" stroke="#9ab6d6" stroke-width="1.4"/>
<path d="M1709.6 1193 V1188.4 Q1709.6 1187 1711 1187 Q1712.4 1187 1712.4 1188.4 V1193 M1709.6 1190.6 H1712.4" stroke="#333" stroke-width=".9"/>
</g>
</svg>

</div>
</body></html>
